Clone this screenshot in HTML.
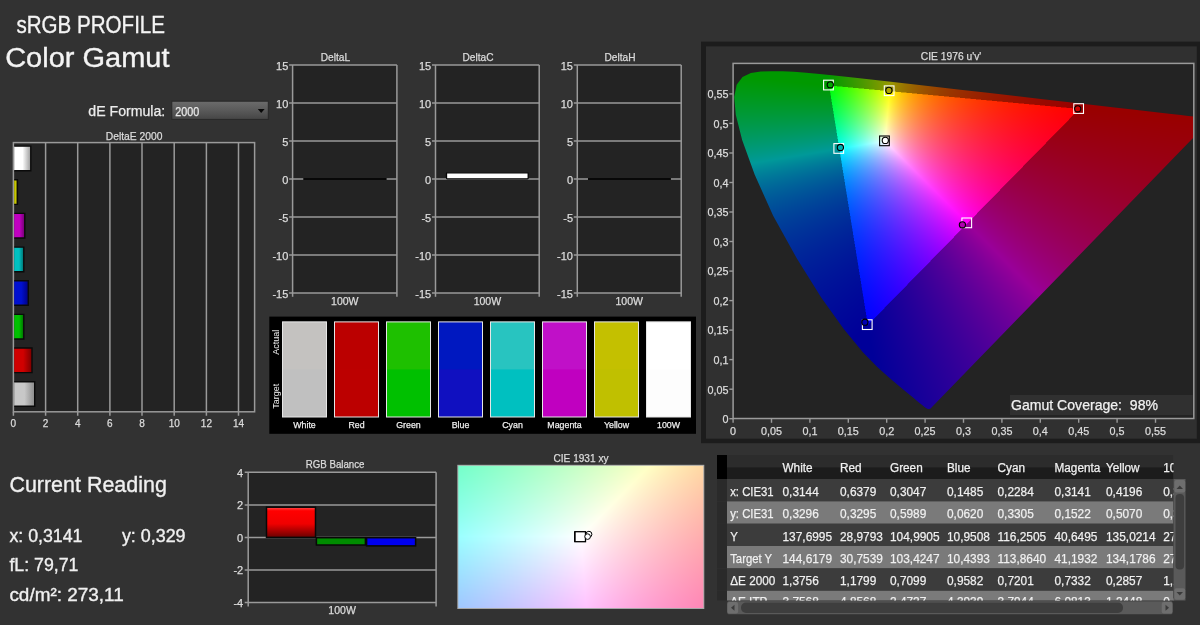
<!DOCTYPE html>
<html><head><meta charset="utf-8"><style>
html,body{margin:0;padding:0;}
body{width:1200px;height:625px;overflow:hidden;background:#323232;position:relative;font-family:"Liberation Sans",sans-serif;}
svg{position:absolute;left:0;top:0;font-family:"Liberation Sans",sans-serif;}
canvas{position:absolute;}
</style></head><body>
<svg width="1200" height="625" viewBox="0 0 1200 625"><defs><linearGradient id="dd" x1="0" y1="0" x2="0" y2="1"><stop offset="0" stop-color="#6c6c6c"/><stop offset="0.5" stop-color="#5a5a5a"/><stop offset="1" stop-color="#454545"/></linearGradient></defs><rect x="171.8" y="101.2" width="96.5" height="18.2" fill="url(#dd)" stroke="#282828" stroke-width="1"/><rect x="13.4" y="142.6" width="241.2" height="269.20000000000005" fill="#232323"/><rect x="292.6" y="65.0" width="104.29999999999995" height="228.0" fill="#232323"/><rect x="435.5" y="65.0" width="103.70000000000005" height="228.0" fill="#232323"/><rect x="577.3" y="65.0" width="103.90000000000009" height="228.0" fill="#232323"/><rect x="269.3" y="316.6" width="426.7" height="117.2" fill="#000"/><rect x="701" y="41.6" width="499" height="401.6" fill="#1c1c1c"/><rect x="706" y="46.4" width="490.8" height="392.3" fill="#303030"/><rect x="248.2" y="472.3" width="187.9" height="130.3" fill="#232323"/><filter id="fb" x="0" y="0" width="1" height="1"><feGaussianBlur stdDeviation="4"/></filter><clipPath id="locus"><path d="M930.3,408.7 L930.2,408.7 L930.0,408.9 L929.8,408.9 L929.5,409.1 L929.1,409.1 L928.6,409.1 L927.9,409.1 L926.8,408.5 L924.8,407.2 L922.1,405.1 L918.2,402.0 L913.3,397.8 L907.2,392.6 L899.0,386.0 L889.3,377.8 L877.3,366.9 L862.9,352.2 L843.8,329.1 L821.2,297.5 L796.7,258.2 L773.1,215.6 L754.7,174.8 L742.2,140.4 L735.8,114.8 L734.2,96.9 L736.7,84.7 L742.5,76.9 L750.9,73.0 L760.8,71.5 L771.5,71.1 L782.5,71.3 L793.9,71.8 L806.3,72.7 L819.7,73.9 L834.4,75.4 L850.7,77.2 L868.7,79.2 L888.7,81.4 L910.6,84.0 L934.6,86.7 L960.4,89.7 L987.7,92.8 L1015.8,96.1 L1043.0,99.2 L1069.4,102.3 L1093.4,105.0 L1114.6,107.5 L1132.7,109.5 L1147.8,111.3 L1160.5,112.7 L1171.5,114.0 L1180.9,115.1 L1188.4,115.9 L1194.3,116.6 L1198.8,117.2 L1202.3,117.5 L1204.5,117.8 L1206.3,118.0 L1207.7,118.2 L1209.2,118.3 L1210.4,118.5 L1211.2,118.6 L1211.7,118.6 L1211.9,118.7 Z"/></clipPath><rect x="733" y="63" width="461" height="356" fill="#232323"/><g clip-path="url(#locus)"><rect x="733" y="63" width="90" height="10" fill="#009900"/><rect x="823" y="63" width="10" height="10" fill="#039900"/><rect x="833" y="63" width="10" height="10" fill="#169900"/><rect x="843" y="63" width="10" height="10" fill="#2a9900"/><rect x="853" y="63" width="10" height="10" fill="#409900"/><rect x="863" y="63" width="10" height="10" fill="#589900"/><rect x="873" y="63" width="10" height="10" fill="#719900"/><rect x="883" y="63" width="10" height="10" fill="#8d9900"/><rect x="893" y="63" width="10" height="10" fill="#998800"/><rect x="903" y="63" width="10" height="10" fill="#997200"/><rect x="913" y="63" width="10" height="10" fill="#996000"/><rect x="923" y="63" width="10" height="10" fill="#995300"/><rect x="933" y="63" width="10" height="10" fill="#994700"/><rect x="943" y="63" width="10" height="10" fill="#993e00"/><rect x="953" y="63" width="10" height="10" fill="#993600"/><rect x="963" y="63" width="10" height="10" fill="#992f00"/><rect x="973" y="63" width="10" height="10" fill="#992900"/><rect x="983" y="63" width="10" height="10" fill="#992300"/><rect x="993" y="63" width="10" height="10" fill="#991f00"/><rect x="1003" y="63" width="10" height="10" fill="#991b00"/><rect x="1013" y="63" width="10" height="10" fill="#991700"/><rect x="1023" y="63" width="10" height="10" fill="#991300"/><rect x="1033" y="63" width="10" height="10" fill="#991000"/><rect x="1043" y="63" width="10" height="10" fill="#990e00"/><rect x="1053" y="63" width="10" height="10" fill="#990b00"/><rect x="1063" y="63" width="10" height="10" fill="#990900"/><rect x="1073" y="63" width="10" height="10" fill="#990700"/><rect x="1083" y="63" width="10" height="10" fill="#990500"/><rect x="1093" y="63" width="10" height="10" fill="#990300"/><rect x="1103" y="63" width="10" height="10" fill="#990100"/><rect x="1113" y="63" width="81" height="10" fill="#990000"/><rect x="733" y="73" width="10" height="10" fill="#009901"/><rect x="743" y="73" width="90" height="10" fill="#009900"/><rect x="833" y="73" width="10" height="10" fill="#139900"/><rect x="843" y="73" width="10" height="10" fill="#289900"/><rect x="853" y="73" width="10" height="10" fill="#3f9900"/><rect x="863" y="73" width="10" height="10" fill="#589900"/><rect x="873" y="73" width="10" height="10" fill="#729900"/><rect x="883" y="73" width="10" height="10" fill="#8f9900"/><rect x="893" y="73" width="10" height="10" fill="#998500"/><rect x="903" y="73" width="10" height="10" fill="#996f00"/><rect x="913" y="73" width="10" height="10" fill="#995d00"/><rect x="923" y="73" width="10" height="10" fill="#995000"/><rect x="933" y="73" width="10" height="10" fill="#994400"/><rect x="943" y="73" width="10" height="10" fill="#993b00"/><rect x="953" y="73" width="10" height="10" fill="#993300"/><rect x="963" y="73" width="10" height="10" fill="#992c00"/><rect x="973" y="73" width="10" height="10" fill="#992600"/><rect x="983" y="73" width="10" height="10" fill="#992100"/><rect x="993" y="73" width="10" height="10" fill="#991c00"/><rect x="1003" y="73" width="10" height="10" fill="#991800"/><rect x="1013" y="73" width="10" height="10" fill="#991500"/><rect x="1023" y="73" width="10" height="10" fill="#991200"/><rect x="1033" y="73" width="10" height="10" fill="#990f00"/><rect x="1043" y="73" width="10" height="10" fill="#990c00"/><rect x="1053" y="73" width="10" height="10" fill="#990900"/><rect x="1063" y="73" width="10" height="10" fill="#990700"/><rect x="1073" y="73" width="10" height="10" fill="#990500"/><rect x="1083" y="73" width="10" height="10" fill="#990300"/><rect x="1093" y="73" width="10" height="10" fill="#990100"/><rect x="1103" y="73" width="91" height="10" fill="#990000"/><rect x="733" y="83" width="10" height="10" fill="#00990f"/><rect x="743" y="83" width="10" height="10" fill="#00990e"/><rect x="753" y="83" width="10" height="10" fill="#00990d"/><rect x="763" y="83" width="10" height="10" fill="#00990c"/><rect x="773" y="83" width="10" height="10" fill="#00990b"/><rect x="783" y="83" width="10" height="10" fill="#00990a"/><rect x="793" y="83" width="10" height="10" fill="#009908"/><rect x="803" y="83" width="10" height="10" fill="#009907"/><rect x="813" y="83" width="10" height="10" fill="#009906"/><rect x="823" y="83" width="10" height="10" fill="#009904"/><rect x="833" y="83" width="10" height="10" fill="#1cff05"/><rect x="843" y="83" width="10" height="10" fill="#40ff02"/><rect x="853" y="83" width="10" height="10" fill="#3e9900"/><rect x="863" y="83" width="10" height="10" fill="#589900"/><rect x="873" y="83" width="10" height="10" fill="#739900"/><rect x="883" y="83" width="10" height="10" fill="#929900"/><rect x="893" y="83" width="10" height="10" fill="#998200"/><rect x="903" y="83" width="10" height="10" fill="#996b00"/><rect x="913" y="83" width="10" height="10" fill="#995a00"/><rect x="923" y="83" width="10" height="10" fill="#994c00"/><rect x="933" y="83" width="10" height="10" fill="#994100"/><rect x="943" y="83" width="10" height="10" fill="#993800"/><rect x="953" y="83" width="10" height="10" fill="#993000"/><rect x="963" y="83" width="10" height="10" fill="#992a00"/><rect x="973" y="83" width="10" height="10" fill="#992400"/><rect x="983" y="83" width="10" height="10" fill="#991f00"/><rect x="993" y="83" width="10" height="10" fill="#991a00"/><rect x="1003" y="83" width="10" height="10" fill="#991600"/><rect x="1013" y="83" width="10" height="10" fill="#991300"/><rect x="1023" y="83" width="10" height="10" fill="#990f00"/><rect x="1033" y="83" width="10" height="10" fill="#990d00"/><rect x="1043" y="83" width="10" height="10" fill="#990a00"/><rect x="1053" y="83" width="10" height="10" fill="#990800"/><rect x="1063" y="83" width="10" height="10" fill="#990500"/><rect x="1073" y="83" width="10" height="10" fill="#990300"/><rect x="1083" y="83" width="10" height="10" fill="#990200"/><rect x="1093" y="83" width="101" height="10" fill="#990000"/><rect x="733" y="93" width="10" height="10" fill="#00991d"/><rect x="743" y="93" width="20" height="10" fill="#00991c"/><rect x="763" y="93" width="20" height="10" fill="#00991b"/><rect x="783" y="93" width="20" height="10" fill="#00991a"/><rect x="803" y="93" width="10" height="10" fill="#009919"/><rect x="813" y="93" width="10" height="10" fill="#009918"/><rect x="823" y="93" width="10" height="10" fill="#009917"/><rect x="833" y="93" width="10" height="10" fill="#18ff26"/><rect x="843" y="93" width="10" height="10" fill="#3dff24"/><rect x="853" y="93" width="10" height="10" fill="#66ff22"/><rect x="863" y="93" width="10" height="10" fill="#92ff20"/><rect x="873" y="93" width="10" height="10" fill="#c3ff1e"/><rect x="883" y="93" width="10" height="10" fill="#f8ff1c"/><rect x="893" y="93" width="10" height="10" fill="#ffd315"/><rect x="903" y="93" width="10" height="10" fill="#ffae0f"/><rect x="913" y="93" width="10" height="10" fill="#ff910b"/><rect x="923" y="93" width="10" height="10" fill="#ff7b07"/><rect x="933" y="93" width="10" height="10" fill="#ff6805"/><rect x="943" y="93" width="10" height="10" fill="#ff5902"/><rect x="953" y="93" width="10" height="10" fill="#ff4c00"/><rect x="963" y="93" width="10" height="10" fill="#992700"/><rect x="973" y="93" width="10" height="10" fill="#992100"/><rect x="983" y="93" width="10" height="10" fill="#991c00"/><rect x="993" y="93" width="10" height="10" fill="#991800"/><rect x="1003" y="93" width="10" height="10" fill="#991400"/><rect x="1013" y="93" width="10" height="10" fill="#991100"/><rect x="1023" y="93" width="10" height="10" fill="#990d00"/><rect x="1033" y="93" width="10" height="10" fill="#990b00"/><rect x="1043" y="93" width="10" height="10" fill="#990800"/><rect x="1053" y="93" width="10" height="10" fill="#990600"/><rect x="1063" y="93" width="10" height="10" fill="#990400"/><rect x="1073" y="93" width="10" height="10" fill="#990200"/><rect x="1083" y="93" width="111" height="10" fill="#990000"/><rect x="733" y="103" width="100" height="10" fill="#00992c"/><rect x="833" y="103" width="10" height="10" fill="#13ff49"/><rect x="843" y="103" width="10" height="10" fill="#3aff49"/><rect x="853" y="103" width="10" height="10" fill="#64ff49"/><rect x="863" y="103" width="10" height="10" fill="#92ff48"/><rect x="873" y="103" width="10" height="10" fill="#c5ff48"/><rect x="883" y="103" width="10" height="10" fill="#feff48"/><rect x="893" y="103" width="10" height="10" fill="#ffcd3a"/><rect x="903" y="103" width="10" height="10" fill="#ffa82f"/><rect x="913" y="103" width="10" height="10" fill="#ff8b27"/><rect x="923" y="103" width="10" height="10" fill="#ff7520"/><rect x="933" y="103" width="10" height="10" fill="#ff631b"/><rect x="943" y="103" width="10" height="10" fill="#ff5417"/><rect x="953" y="103" width="10" height="10" fill="#ff4713"/><rect x="963" y="103" width="10" height="10" fill="#ff3d10"/><rect x="973" y="103" width="10" height="10" fill="#ff330d"/><rect x="983" y="103" width="10" height="10" fill="#ff2b0b"/><rect x="993" y="103" width="10" height="10" fill="#ff2409"/><rect x="1003" y="103" width="10" height="10" fill="#ff1e07"/><rect x="1013" y="103" width="10" height="10" fill="#ff1806"/><rect x="1023" y="103" width="10" height="10" fill="#ff1304"/><rect x="1033" y="103" width="10" height="10" fill="#ff0f03"/><rect x="1043" y="103" width="10" height="10" fill="#ff0b02"/><rect x="1053" y="103" width="10" height="10" fill="#ff0701"/><rect x="1063" y="103" width="10" height="10" fill="#ff0300"/><rect x="1073" y="103" width="121" height="10" fill="#990000"/><rect x="733" y="113" width="10" height="10" fill="#00993c"/><rect x="743" y="113" width="20" height="10" fill="#00993d"/><rect x="763" y="113" width="20" height="10" fill="#00993e"/><rect x="783" y="113" width="10" height="10" fill="#00993f"/><rect x="793" y="113" width="20" height="10" fill="#009940"/><rect x="813" y="113" width="10" height="10" fill="#009941"/><rect x="823" y="113" width="10" height="10" fill="#009942"/><rect x="833" y="113" width="10" height="10" fill="#0dff6f"/><rect x="843" y="113" width="10" height="10" fill="#36ff71"/><rect x="853" y="113" width="10" height="10" fill="#62ff73"/><rect x="863" y="113" width="10" height="10" fill="#92ff75"/><rect x="873" y="113" width="10" height="10" fill="#c8ff77"/><rect x="883" y="113" width="10" height="10" fill="#fffa77"/><rect x="893" y="113" width="10" height="10" fill="#ffc760"/><rect x="903" y="113" width="10" height="10" fill="#ffa250"/><rect x="913" y="113" width="10" height="10" fill="#ff8644"/><rect x="923" y="113" width="10" height="10" fill="#ff6f3a"/><rect x="933" y="113" width="10" height="10" fill="#ff5e32"/><rect x="943" y="113" width="10" height="10" fill="#ff4f2c"/><rect x="953" y="113" width="10" height="10" fill="#ff4227"/><rect x="963" y="113" width="10" height="10" fill="#ff3822"/><rect x="973" y="113" width="10" height="10" fill="#ff2f1e"/><rect x="983" y="113" width="10" height="10" fill="#ff271b"/><rect x="993" y="113" width="10" height="10" fill="#ff2018"/><rect x="1003" y="113" width="10" height="10" fill="#ff1a15"/><rect x="1013" y="113" width="10" height="10" fill="#ff1513"/><rect x="1023" y="113" width="10" height="10" fill="#ff1010"/><rect x="1033" y="113" width="10" height="10" fill="#ff0b0f"/><rect x="1043" y="113" width="10" height="10" fill="#ff070d"/><rect x="1053" y="113" width="10" height="10" fill="#ff040b"/><rect x="1063" y="113" width="10" height="10" fill="#ff000a"/><rect x="1073" y="113" width="10" height="10" fill="#990005"/><rect x="1083" y="113" width="10" height="10" fill="#990004"/><rect x="1093" y="113" width="20" height="10" fill="#990003"/><rect x="1113" y="113" width="20" height="10" fill="#990002"/><rect x="1133" y="113" width="20" height="10" fill="#990001"/><rect x="1153" y="113" width="41" height="10" fill="#990000"/><rect x="733" y="123" width="10" height="10" fill="#00994d"/><rect x="743" y="123" width="10" height="10" fill="#00994e"/><rect x="753" y="123" width="10" height="10" fill="#009950"/><rect x="763" y="123" width="10" height="10" fill="#009951"/><rect x="773" y="123" width="10" height="10" fill="#009952"/><rect x="783" y="123" width="10" height="10" fill="#009953"/><rect x="793" y="123" width="10" height="10" fill="#009955"/><rect x="803" y="123" width="10" height="10" fill="#009956"/><rect x="813" y="123" width="10" height="10" fill="#009958"/><rect x="823" y="123" width="10" height="10" fill="#00995a"/><rect x="833" y="123" width="10" height="10" fill="#08ff99"/><rect x="843" y="123" width="10" height="10" fill="#31ff9d"/><rect x="853" y="123" width="10" height="10" fill="#60ffa1"/><rect x="863" y="123" width="10" height="10" fill="#92ffa5"/><rect x="873" y="123" width="10" height="10" fill="#cbffaa"/><rect x="883" y="123" width="10" height="10" fill="#fff4a8"/><rect x="893" y="123" width="10" height="10" fill="#ffc089"/><rect x="903" y="123" width="10" height="10" fill="#ff9b73"/><rect x="913" y="123" width="10" height="10" fill="#ff7f62"/><rect x="923" y="123" width="10" height="10" fill="#ff6a55"/><rect x="933" y="123" width="10" height="10" fill="#ff584a"/><rect x="943" y="123" width="10" height="10" fill="#ff4942"/><rect x="953" y="123" width="10" height="10" fill="#ff3d3b"/><rect x="963" y="123" width="10" height="10" fill="#ff3334"/><rect x="973" y="123" width="10" height="10" fill="#ff2a2f"/><rect x="983" y="123" width="10" height="10" fill="#ff232b"/><rect x="993" y="123" width="10" height="10" fill="#ff1c26"/><rect x="1003" y="123" width="10" height="10" fill="#ff1623"/><rect x="1013" y="123" width="10" height="10" fill="#ff1120"/><rect x="1023" y="123" width="10" height="10" fill="#ff0c1d"/><rect x="1033" y="123" width="10" height="10" fill="#ff081a"/><rect x="1043" y="123" width="10" height="10" fill="#ff0418"/><rect x="1053" y="123" width="10" height="10" fill="#ff0016"/><rect x="1063" y="123" width="10" height="10" fill="#99000c"/><rect x="1073" y="123" width="10" height="10" fill="#99000b"/><rect x="1083" y="123" width="10" height="10" fill="#99000a"/><rect x="1093" y="123" width="10" height="10" fill="#990009"/><rect x="1103" y="123" width="10" height="10" fill="#990008"/><rect x="1113" y="123" width="20" height="10" fill="#990007"/><rect x="1133" y="123" width="10" height="10" fill="#990006"/><rect x="1143" y="123" width="20" height="10" fill="#990005"/><rect x="1163" y="123" width="20" height="10" fill="#990004"/><rect x="1183" y="123" width="11" height="10" fill="#990003"/><rect x="733" y="133" width="10" height="10" fill="#009960"/><rect x="743" y="133" width="10" height="10" fill="#009961"/><rect x="753" y="133" width="10" height="10" fill="#009963"/><rect x="763" y="133" width="10" height="10" fill="#009965"/><rect x="773" y="133" width="10" height="10" fill="#009967"/><rect x="783" y="133" width="10" height="10" fill="#009969"/><rect x="793" y="133" width="10" height="10" fill="#00996b"/><rect x="803" y="133" width="10" height="10" fill="#00996e"/><rect x="813" y="133" width="10" height="10" fill="#009971"/><rect x="823" y="133" width="10" height="10" fill="#009974"/><rect x="833" y="133" width="10" height="10" fill="#01ffc7"/><rect x="843" y="133" width="10" height="10" fill="#2dffcd"/><rect x="853" y="133" width="10" height="10" fill="#5dffd3"/><rect x="863" y="133" width="10" height="10" fill="#92ffdb"/><rect x="873" y="133" width="10" height="10" fill="#ceffe3"/><rect x="883" y="133" width="10" height="10" fill="#ffeddc"/><rect x="893" y="133" width="10" height="10" fill="#ffbab4"/><rect x="903" y="133" width="10" height="10" fill="#ff9597"/><rect x="913" y="133" width="10" height="10" fill="#ff7982"/><rect x="923" y="133" width="10" height="10" fill="#ff6371"/><rect x="933" y="133" width="10" height="10" fill="#ff5263"/><rect x="943" y="133" width="10" height="10" fill="#ff4458"/><rect x="953" y="133" width="10" height="10" fill="#ff384f"/><rect x="963" y="133" width="10" height="10" fill="#ff2e47"/><rect x="973" y="133" width="10" height="10" fill="#ff2641"/><rect x="983" y="133" width="10" height="10" fill="#ff1e3b"/><rect x="993" y="133" width="10" height="10" fill="#ff1836"/><rect x="1003" y="133" width="10" height="10" fill="#ff1231"/><rect x="1013" y="133" width="10" height="10" fill="#ff0d2d"/><rect x="1023" y="133" width="10" height="10" fill="#ff082a"/><rect x="1033" y="133" width="10" height="10" fill="#ff0426"/><rect x="1043" y="133" width="10" height="10" fill="#ff0124"/><rect x="1053" y="133" width="10" height="10" fill="#990014"/><rect x="1063" y="133" width="10" height="10" fill="#990012"/><rect x="1073" y="133" width="10" height="10" fill="#990011"/><rect x="1083" y="133" width="10" height="10" fill="#990010"/><rect x="1093" y="133" width="10" height="10" fill="#99000e"/><rect x="1103" y="133" width="10" height="10" fill="#99000d"/><rect x="1113" y="133" width="10" height="10" fill="#99000c"/><rect x="1123" y="133" width="20" height="10" fill="#99000b"/><rect x="1143" y="133" width="10" height="10" fill="#99000a"/><rect x="1153" y="133" width="10" height="10" fill="#990009"/><rect x="1163" y="133" width="20" height="10" fill="#990008"/><rect x="1183" y="133" width="11" height="10" fill="#990007"/><rect x="733" y="143" width="10" height="10" fill="#009973"/><rect x="743" y="143" width="10" height="10" fill="#009975"/><rect x="753" y="143" width="10" height="10" fill="#009978"/><rect x="763" y="143" width="10" height="10" fill="#00997b"/><rect x="773" y="143" width="10" height="10" fill="#00997e"/><rect x="783" y="143" width="10" height="10" fill="#009981"/><rect x="793" y="143" width="10" height="10" fill="#009984"/><rect x="803" y="143" width="10" height="10" fill="#009988"/><rect x="813" y="143" width="10" height="10" fill="#00998c"/><rect x="823" y="143" width="10" height="10" fill="#009990"/><rect x="833" y="143" width="10" height="10" fill="#009995"/><rect x="843" y="143" width="10" height="10" fill="#27fbff"/><rect x="853" y="143" width="10" height="10" fill="#56f2ff"/><rect x="863" y="143" width="10" height="10" fill="#86e8ff"/><rect x="873" y="143" width="10" height="10" fill="#b7deff"/><rect x="883" y="143" width="10" height="10" fill="#ebd4ff"/><rect x="893" y="143" width="10" height="10" fill="#ffb3e1"/><rect x="903" y="143" width="10" height="10" fill="#ff8ebd"/><rect x="913" y="143" width="10" height="10" fill="#ff72a2"/><rect x="923" y="143" width="10" height="10" fill="#ff5d8e"/><rect x="933" y="143" width="10" height="10" fill="#ff4c7d"/><rect x="943" y="143" width="10" height="10" fill="#ff3e6f"/><rect x="953" y="143" width="10" height="10" fill="#ff3364"/><rect x="963" y="143" width="10" height="10" fill="#ff295b"/><rect x="973" y="143" width="10" height="10" fill="#ff2152"/><rect x="983" y="143" width="10" height="10" fill="#ff1a4b"/><rect x="993" y="143" width="10" height="10" fill="#ff1345"/><rect x="1003" y="143" width="10" height="10" fill="#ff0e40"/><rect x="1013" y="143" width="10" height="10" fill="#ff093b"/><rect x="1023" y="143" width="10" height="10" fill="#ff0537"/><rect x="1033" y="143" width="10" height="10" fill="#ff0133"/><rect x="1043" y="143" width="10" height="10" fill="#99001c"/><rect x="1053" y="143" width="10" height="10" fill="#99001a"/><rect x="1063" y="143" width="10" height="10" fill="#990018"/><rect x="1073" y="143" width="10" height="10" fill="#990017"/><rect x="1083" y="143" width="10" height="10" fill="#990015"/><rect x="1093" y="143" width="10" height="10" fill="#990014"/><rect x="1103" y="143" width="10" height="10" fill="#990013"/><rect x="1113" y="143" width="10" height="10" fill="#990012"/><rect x="1123" y="143" width="10" height="10" fill="#990010"/><rect x="1133" y="143" width="20" height="10" fill="#99000f"/><rect x="1153" y="143" width="10" height="10" fill="#99000e"/><rect x="1163" y="143" width="10" height="10" fill="#99000d"/><rect x="1173" y="143" width="10" height="10" fill="#99000c"/><rect x="1183" y="143" width="11" height="10" fill="#99000b"/><rect x="733" y="153" width="10" height="10" fill="#009988"/><rect x="743" y="153" width="10" height="10" fill="#00998b"/><rect x="753" y="153" width="10" height="10" fill="#00998e"/><rect x="763" y="153" width="10" height="10" fill="#009992"/><rect x="773" y="153" width="10" height="10" fill="#009996"/><rect x="783" y="153" width="10" height="10" fill="#009799"/><rect x="793" y="153" width="10" height="10" fill="#009299"/><rect x="803" y="153" width="10" height="10" fill="#008e99"/><rect x="813" y="153" width="10" height="10" fill="#008999"/><rect x="823" y="153" width="10" height="10" fill="#008599"/><rect x="833" y="153" width="10" height="10" fill="#008099"/><rect x="843" y="153" width="10" height="10" fill="#1bcdff"/><rect x="853" y="153" width="10" height="10" fill="#43c4ff"/><rect x="863" y="153" width="10" height="10" fill="#6cbbff"/><rect x="873" y="153" width="10" height="10" fill="#96b2ff"/><rect x="883" y="153" width="10" height="10" fill="#c1a9ff"/><rect x="893" y="153" width="10" height="10" fill="#ed9fff"/><rect x="903" y="153" width="10" height="10" fill="#ff87e5"/><rect x="913" y="153" width="10" height="10" fill="#ff6cc4"/><rect x="923" y="153" width="10" height="10" fill="#ff57ab"/><rect x="933" y="153" width="10" height="10" fill="#ff4697"/><rect x="943" y="153" width="10" height="10" fill="#ff3987"/><rect x="953" y="153" width="10" height="10" fill="#ff2e7a"/><rect x="963" y="153" width="10" height="10" fill="#ff246e"/><rect x="973" y="153" width="10" height="10" fill="#ff1c65"/><rect x="983" y="153" width="10" height="10" fill="#ff155c"/><rect x="993" y="153" width="10" height="10" fill="#ff0f55"/><rect x="1003" y="153" width="10" height="10" fill="#ff0a4e"/><rect x="1013" y="153" width="10" height="10" fill="#ff0549"/><rect x="1023" y="153" width="10" height="10" fill="#ff0144"/><rect x="1033" y="153" width="10" height="10" fill="#990026"/><rect x="1043" y="153" width="10" height="10" fill="#990023"/><rect x="1053" y="153" width="10" height="10" fill="#990021"/><rect x="1063" y="153" width="10" height="10" fill="#99001f"/><rect x="1073" y="153" width="10" height="10" fill="#99001d"/><rect x="1083" y="153" width="10" height="10" fill="#99001b"/><rect x="1093" y="153" width="10" height="10" fill="#99001a"/><rect x="1103" y="153" width="10" height="10" fill="#990018"/><rect x="1113" y="153" width="10" height="10" fill="#990017"/><rect x="1123" y="153" width="10" height="10" fill="#990016"/><rect x="1133" y="153" width="10" height="10" fill="#990014"/><rect x="1143" y="153" width="10" height="10" fill="#990013"/><rect x="1153" y="153" width="10" height="10" fill="#990012"/><rect x="1163" y="153" width="10" height="10" fill="#990011"/><rect x="1173" y="153" width="10" height="10" fill="#990010"/><rect x="1183" y="153" width="11" height="10" fill="#99000f"/><rect x="733" y="163" width="10" height="10" fill="#009399"/><rect x="743" y="163" width="10" height="10" fill="#009099"/><rect x="753" y="163" width="10" height="10" fill="#008c99"/><rect x="763" y="163" width="10" height="10" fill="#008899"/><rect x="773" y="163" width="10" height="10" fill="#008499"/><rect x="783" y="163" width="10" height="10" fill="#008099"/><rect x="793" y="163" width="10" height="10" fill="#007c99"/><rect x="803" y="163" width="10" height="10" fill="#007899"/><rect x="813" y="163" width="10" height="10" fill="#007399"/><rect x="823" y="163" width="10" height="10" fill="#006f99"/><rect x="833" y="163" width="10" height="10" fill="#006a99"/><rect x="843" y="163" width="10" height="10" fill="#12aaff"/><rect x="853" y="163" width="10" height="10" fill="#35a2ff"/><rect x="863" y="163" width="10" height="10" fill="#589aff"/><rect x="873" y="163" width="10" height="10" fill="#7d91ff"/><rect x="883" y="163" width="10" height="10" fill="#a289ff"/><rect x="893" y="163" width="10" height="10" fill="#c880ff"/><rect x="903" y="163" width="10" height="10" fill="#ef77ff"/><rect x="913" y="163" width="10" height="10" fill="#ff64e8"/><rect x="923" y="163" width="10" height="10" fill="#ff50ca"/><rect x="933" y="163" width="10" height="10" fill="#ff40b3"/><rect x="943" y="163" width="10" height="10" fill="#ff33a0"/><rect x="953" y="163" width="10" height="10" fill="#ff2890"/><rect x="963" y="163" width="10" height="10" fill="#ff1f83"/><rect x="973" y="163" width="10" height="10" fill="#ff1777"/><rect x="983" y="163" width="10" height="10" fill="#ff106e"/><rect x="993" y="163" width="10" height="10" fill="#ff0b65"/><rect x="1003" y="163" width="10" height="10" fill="#ff065e"/><rect x="1013" y="163" width="10" height="10" fill="#ff0157"/><rect x="1023" y="163" width="10" height="10" fill="#990030"/><rect x="1033" y="163" width="10" height="10" fill="#99002d"/><rect x="1043" y="163" width="10" height="10" fill="#99002a"/><rect x="1053" y="163" width="10" height="10" fill="#990028"/><rect x="1063" y="163" width="10" height="10" fill="#990025"/><rect x="1073" y="163" width="10" height="10" fill="#990023"/><rect x="1083" y="163" width="10" height="10" fill="#990021"/><rect x="1093" y="163" width="10" height="10" fill="#99001f"/><rect x="1103" y="163" width="10" height="10" fill="#99001e"/><rect x="1113" y="163" width="10" height="10" fill="#99001c"/><rect x="1123" y="163" width="10" height="10" fill="#99001b"/><rect x="1133" y="163" width="10" height="10" fill="#990019"/><rect x="1143" y="163" width="10" height="10" fill="#990018"/><rect x="1153" y="163" width="10" height="10" fill="#990017"/><rect x="1163" y="163" width="10" height="10" fill="#990016"/><rect x="1173" y="163" width="10" height="10" fill="#990015"/><rect x="1183" y="163" width="10" height="10" fill="#990014"/><rect x="1193" y="163" width="1" height="10" fill="#990013"/><rect x="733" y="173" width="10" height="10" fill="#008099"/><rect x="743" y="173" width="10" height="10" fill="#007d99"/><rect x="753" y="173" width="10" height="10" fill="#007999"/><rect x="763" y="173" width="10" height="10" fill="#007599"/><rect x="773" y="173" width="10" height="10" fill="#007299"/><rect x="783" y="173" width="10" height="10" fill="#006e99"/><rect x="793" y="173" width="10" height="10" fill="#006a99"/><rect x="803" y="173" width="10" height="10" fill="#006699"/><rect x="813" y="173" width="10" height="10" fill="#006299"/><rect x="823" y="173" width="10" height="10" fill="#005e99"/><rect x="833" y="173" width="10" height="10" fill="#005a99"/><rect x="843" y="173" width="10" height="10" fill="#0b8eff"/><rect x="853" y="173" width="10" height="10" fill="#2a87ff"/><rect x="863" y="173" width="10" height="10" fill="#4980ff"/><rect x="873" y="173" width="10" height="10" fill="#6978ff"/><rect x="883" y="173" width="10" height="10" fill="#8a70ff"/><rect x="893" y="173" width="10" height="10" fill="#ac68ff"/><rect x="903" y="173" width="10" height="10" fill="#ce60ff"/><rect x="913" y="173" width="10" height="10" fill="#f158ff"/><rect x="923" y="173" width="10" height="10" fill="#ff49ea"/><rect x="933" y="173" width="10" height="10" fill="#ff39cf"/><rect x="943" y="173" width="10" height="10" fill="#ff2db9"/><rect x="953" y="173" width="10" height="10" fill="#ff22a7"/><rect x="963" y="173" width="10" height="10" fill="#ff1997"/><rect x="973" y="173" width="10" height="10" fill="#ff128a"/><rect x="983" y="173" width="10" height="10" fill="#ff0c7f"/><rect x="993" y="173" width="10" height="10" fill="#ff0675"/><rect x="1003" y="173" width="10" height="10" fill="#ff016d"/><rect x="1013" y="173" width="10" height="10" fill="#99003d"/><rect x="1023" y="173" width="10" height="10" fill="#990039"/><rect x="1033" y="173" width="10" height="10" fill="#990035"/><rect x="1043" y="173" width="10" height="10" fill="#990032"/><rect x="1053" y="173" width="10" height="10" fill="#99002f"/><rect x="1063" y="173" width="10" height="10" fill="#99002c"/><rect x="1073" y="173" width="10" height="10" fill="#99002a"/><rect x="1083" y="173" width="10" height="10" fill="#990027"/><rect x="1093" y="173" width="10" height="10" fill="#990025"/><rect x="1103" y="173" width="10" height="10" fill="#990023"/><rect x="1113" y="173" width="10" height="10" fill="#990021"/><rect x="1123" y="173" width="10" height="10" fill="#990020"/><rect x="1133" y="173" width="10" height="10" fill="#99001e"/><rect x="1143" y="173" width="10" height="10" fill="#99001d"/><rect x="1153" y="173" width="10" height="10" fill="#99001b"/><rect x="1163" y="173" width="10" height="10" fill="#99001a"/><rect x="1173" y="173" width="10" height="10" fill="#990019"/><rect x="1183" y="173" width="10" height="10" fill="#990018"/><rect x="1193" y="173" width="1" height="10" fill="#990017"/><rect x="733" y="183" width="10" height="10" fill="#007099"/><rect x="743" y="183" width="10" height="10" fill="#006d99"/><rect x="753" y="183" width="10" height="10" fill="#006a99"/><rect x="763" y="183" width="10" height="10" fill="#006699"/><rect x="773" y="183" width="10" height="10" fill="#006399"/><rect x="783" y="183" width="10" height="10" fill="#005f99"/><rect x="793" y="183" width="10" height="10" fill="#005b99"/><rect x="803" y="183" width="10" height="10" fill="#005899"/><rect x="813" y="183" width="10" height="10" fill="#005499"/><rect x="823" y="183" width="10" height="10" fill="#005099"/><rect x="833" y="183" width="10" height="10" fill="#004c99"/><rect x="843" y="183" width="10" height="10" fill="#0679ff"/><rect x="853" y="183" width="10" height="10" fill="#2172ff"/><rect x="863" y="183" width="10" height="10" fill="#3d6bff"/><rect x="873" y="183" width="10" height="10" fill="#5a64ff"/><rect x="883" y="183" width="10" height="10" fill="#775dff"/><rect x="893" y="183" width="10" height="10" fill="#9555ff"/><rect x="903" y="183" width="10" height="10" fill="#b34eff"/><rect x="913" y="183" width="10" height="10" fill="#d246ff"/><rect x="923" y="183" width="10" height="10" fill="#f23eff"/><rect x="933" y="183" width="10" height="10" fill="#ff32ec"/><rect x="943" y="183" width="10" height="10" fill="#ff26d3"/><rect x="953" y="183" width="10" height="10" fill="#ff1cbe"/><rect x="963" y="183" width="10" height="10" fill="#ff14ad"/><rect x="973" y="183" width="10" height="10" fill="#ff0d9e"/><rect x="983" y="183" width="10" height="10" fill="#ff0791"/><rect x="993" y="183" width="10" height="10" fill="#ff0186"/><rect x="1003" y="183" width="10" height="10" fill="#99004b"/><rect x="1013" y="183" width="10" height="10" fill="#990045"/><rect x="1023" y="183" width="10" height="10" fill="#990041"/><rect x="1033" y="183" width="10" height="10" fill="#99003d"/><rect x="1043" y="183" width="10" height="10" fill="#990039"/><rect x="1053" y="183" width="10" height="10" fill="#990036"/><rect x="1063" y="183" width="10" height="10" fill="#990033"/><rect x="1073" y="183" width="10" height="10" fill="#990030"/><rect x="1083" y="183" width="10" height="10" fill="#99002d"/><rect x="1093" y="183" width="10" height="10" fill="#99002b"/><rect x="1103" y="183" width="10" height="10" fill="#990029"/><rect x="1113" y="183" width="10" height="10" fill="#990027"/><rect x="1123" y="183" width="10" height="10" fill="#990025"/><rect x="1133" y="183" width="10" height="10" fill="#990023"/><rect x="1143" y="183" width="10" height="10" fill="#990022"/><rect x="1153" y="183" width="10" height="10" fill="#990020"/><rect x="1163" y="183" width="10" height="10" fill="#99001f"/><rect x="1173" y="183" width="10" height="10" fill="#99001d"/><rect x="1183" y="183" width="10" height="10" fill="#99001c"/><rect x="1193" y="183" width="1" height="10" fill="#99001b"/><rect x="733" y="193" width="10" height="10" fill="#006399"/><rect x="743" y="193" width="10" height="10" fill="#006099"/><rect x="753" y="193" width="10" height="10" fill="#005d99"/><rect x="763" y="193" width="10" height="10" fill="#005a99"/><rect x="773" y="193" width="10" height="10" fill="#005699"/><rect x="783" y="193" width="10" height="10" fill="#005399"/><rect x="793" y="193" width="10" height="10" fill="#004f99"/><rect x="803" y="193" width="10" height="10" fill="#004c99"/><rect x="813" y="193" width="10" height="10" fill="#004899"/><rect x="823" y="193" width="10" height="10" fill="#004599"/><rect x="833" y="193" width="10" height="10" fill="#004199"/><rect x="843" y="193" width="10" height="10" fill="#0167ff"/><rect x="853" y="193" width="10" height="10" fill="#1a60ff"/><rect x="863" y="193" width="10" height="10" fill="#345aff"/><rect x="873" y="193" width="10" height="10" fill="#4e53ff"/><rect x="883" y="193" width="10" height="10" fill="#684dff"/><rect x="893" y="193" width="10" height="10" fill="#8346ff"/><rect x="903" y="193" width="10" height="10" fill="#9e3fff"/><rect x="913" y="193" width="10" height="10" fill="#ba38ff"/><rect x="923" y="193" width="10" height="10" fill="#d631ff"/><rect x="933" y="193" width="10" height="10" fill="#f329ff"/><rect x="943" y="193" width="10" height="10" fill="#ff20ee"/><rect x="953" y="193" width="10" height="10" fill="#ff16d6"/><rect x="963" y="193" width="10" height="10" fill="#ff0ec3"/><rect x="973" y="193" width="10" height="10" fill="#ff07b2"/><rect x="983" y="193" width="10" height="10" fill="#ff02a4"/><rect x="993" y="193" width="10" height="10" fill="#99005b"/><rect x="1003" y="193" width="10" height="10" fill="#990054"/><rect x="1013" y="193" width="10" height="10" fill="#99004e"/><rect x="1023" y="193" width="10" height="10" fill="#990049"/><rect x="1033" y="193" width="10" height="10" fill="#990045"/><rect x="1043" y="193" width="10" height="10" fill="#990041"/><rect x="1053" y="193" width="10" height="10" fill="#99003d"/><rect x="1063" y="193" width="10" height="10" fill="#99003a"/><rect x="1073" y="193" width="10" height="10" fill="#990036"/><rect x="1083" y="193" width="10" height="10" fill="#990034"/><rect x="1093" y="193" width="10" height="10" fill="#990031"/><rect x="1103" y="193" width="10" height="10" fill="#99002f"/><rect x="1113" y="193" width="10" height="10" fill="#99002c"/><rect x="1123" y="193" width="10" height="10" fill="#99002a"/><rect x="1133" y="193" width="10" height="10" fill="#990028"/><rect x="1143" y="193" width="10" height="10" fill="#990027"/><rect x="1153" y="193" width="10" height="10" fill="#990025"/><rect x="1163" y="193" width="10" height="10" fill="#990023"/><rect x="1173" y="193" width="10" height="10" fill="#990022"/><rect x="1183" y="193" width="10" height="10" fill="#990020"/><rect x="1193" y="193" width="1" height="10" fill="#99001f"/><rect x="733" y="203" width="10" height="10" fill="#005899"/><rect x="743" y="203" width="10" height="10" fill="#005599"/><rect x="753" y="203" width="10" height="10" fill="#005299"/><rect x="763" y="203" width="10" height="10" fill="#004f99"/><rect x="773" y="203" width="10" height="10" fill="#004c99"/><rect x="783" y="203" width="10" height="10" fill="#004999"/><rect x="793" y="203" width="10" height="10" fill="#004599"/><rect x="803" y="203" width="10" height="10" fill="#004299"/><rect x="813" y="203" width="10" height="10" fill="#003f99"/><rect x="823" y="203" width="10" height="10" fill="#003b99"/><rect x="833" y="203" width="10" height="10" fill="#003899"/><rect x="843" y="203" width="10" height="10" fill="#003499"/><rect x="853" y="203" width="10" height="10" fill="#1452ff"/><rect x="863" y="203" width="10" height="10" fill="#2c4cff"/><rect x="873" y="203" width="10" height="10" fill="#4346ff"/><rect x="883" y="203" width="10" height="10" fill="#5b3fff"/><rect x="893" y="203" width="10" height="10" fill="#7439ff"/><rect x="903" y="203" width="10" height="10" fill="#8c33ff"/><rect x="913" y="203" width="10" height="10" fill="#a62cff"/><rect x="923" y="203" width="10" height="10" fill="#bf26ff"/><rect x="933" y="203" width="10" height="10" fill="#d91fff"/><rect x="943" y="203" width="10" height="10" fill="#f418ff"/><rect x="953" y="203" width="10" height="10" fill="#ff10ef"/><rect x="963" y="203" width="10" height="10" fill="#ff08d9"/><rect x="973" y="203" width="10" height="10" fill="#ff02c7"/><rect x="983" y="203" width="10" height="10" fill="#99006d"/><rect x="993" y="203" width="10" height="10" fill="#990065"/><rect x="1003" y="203" width="10" height="10" fill="#99005e"/><rect x="1013" y="203" width="10" height="10" fill="#990058"/><rect x="1023" y="203" width="10" height="10" fill="#990052"/><rect x="1033" y="203" width="10" height="10" fill="#99004d"/><rect x="1043" y="203" width="10" height="10" fill="#990048"/><rect x="1053" y="203" width="10" height="10" fill="#990044"/><rect x="1063" y="203" width="10" height="10" fill="#990040"/><rect x="1073" y="203" width="10" height="10" fill="#99003d"/><rect x="1083" y="203" width="10" height="10" fill="#99003a"/><rect x="1093" y="203" width="10" height="10" fill="#990037"/><rect x="1103" y="203" width="10" height="10" fill="#990034"/><rect x="1113" y="203" width="10" height="10" fill="#990032"/><rect x="1123" y="203" width="10" height="10" fill="#990030"/><rect x="1133" y="203" width="10" height="10" fill="#99002d"/><rect x="1143" y="203" width="10" height="10" fill="#99002c"/><rect x="1153" y="203" width="10" height="10" fill="#99002a"/><rect x="1163" y="203" width="10" height="10" fill="#990028"/><rect x="1173" y="203" width="10" height="10" fill="#990026"/><rect x="1183" y="203" width="10" height="10" fill="#990025"/><rect x="1193" y="203" width="1" height="10" fill="#990023"/><rect x="733" y="213" width="10" height="10" fill="#004f99"/><rect x="743" y="213" width="10" height="10" fill="#004c99"/><rect x="753" y="213" width="10" height="10" fill="#004999"/><rect x="763" y="213" width="10" height="10" fill="#004699"/><rect x="773" y="213" width="10" height="10" fill="#004399"/><rect x="783" y="213" width="10" height="10" fill="#004099"/><rect x="793" y="213" width="10" height="10" fill="#003d99"/><rect x="803" y="213" width="10" height="10" fill="#003a99"/><rect x="813" y="213" width="10" height="10" fill="#003699"/><rect x="823" y="213" width="10" height="10" fill="#003399"/><rect x="833" y="213" width="10" height="10" fill="#003099"/><rect x="843" y="213" width="10" height="10" fill="#002d99"/><rect x="853" y="213" width="10" height="10" fill="#0f45ff"/><rect x="863" y="213" width="10" height="10" fill="#2540ff"/><rect x="873" y="213" width="10" height="10" fill="#3a3aff"/><rect x="883" y="213" width="10" height="10" fill="#5034ff"/><rect x="893" y="213" width="10" height="10" fill="#672eff"/><rect x="903" y="213" width="10" height="10" fill="#7e28ff"/><rect x="913" y="213" width="10" height="10" fill="#9522ff"/><rect x="923" y="213" width="10" height="10" fill="#ac1cff"/><rect x="933" y="213" width="10" height="10" fill="#c416ff"/><rect x="943" y="213" width="10" height="10" fill="#dc10ff"/><rect x="953" y="213" width="10" height="10" fill="#f409ff"/><rect x="963" y="213" width="10" height="10" fill="#ff02f0"/><rect x="973" y="213" width="10" height="10" fill="#990084"/><rect x="983" y="213" width="10" height="10" fill="#990079"/><rect x="993" y="213" width="10" height="10" fill="#990070"/><rect x="1003" y="213" width="10" height="10" fill="#990068"/><rect x="1013" y="213" width="10" height="10" fill="#990061"/><rect x="1023" y="213" width="10" height="10" fill="#99005b"/><rect x="1033" y="213" width="10" height="10" fill="#990055"/><rect x="1043" y="213" width="10" height="10" fill="#990050"/><rect x="1053" y="213" width="10" height="10" fill="#99004c"/><rect x="1063" y="213" width="10" height="10" fill="#990047"/><rect x="1073" y="213" width="10" height="10" fill="#990044"/><rect x="1083" y="213" width="10" height="10" fill="#990040"/><rect x="1093" y="213" width="10" height="10" fill="#99003d"/><rect x="1103" y="213" width="10" height="10" fill="#99003a"/><rect x="1113" y="213" width="10" height="10" fill="#990038"/><rect x="1123" y="213" width="10" height="10" fill="#990035"/><rect x="1133" y="213" width="10" height="10" fill="#990033"/><rect x="1143" y="213" width="10" height="10" fill="#990031"/><rect x="1153" y="213" width="10" height="10" fill="#99002f"/><rect x="1163" y="213" width="10" height="10" fill="#99002d"/><rect x="1173" y="213" width="10" height="10" fill="#99002b"/><rect x="1183" y="213" width="10" height="10" fill="#990029"/><rect x="1193" y="213" width="1" height="10" fill="#990028"/><rect x="733" y="223" width="10" height="10" fill="#004699"/><rect x="743" y="223" width="10" height="10" fill="#004399"/><rect x="753" y="223" width="10" height="10" fill="#004199"/><rect x="763" y="223" width="10" height="10" fill="#003e99"/><rect x="773" y="223" width="10" height="10" fill="#003b99"/><rect x="783" y="223" width="10" height="10" fill="#003899"/><rect x="793" y="223" width="10" height="10" fill="#003599"/><rect x="803" y="223" width="10" height="10" fill="#003299"/><rect x="813" y="223" width="10" height="10" fill="#002f99"/><rect x="823" y="223" width="10" height="10" fill="#002c99"/><rect x="833" y="223" width="10" height="10" fill="#002999"/><rect x="843" y="223" width="10" height="10" fill="#002699"/><rect x="853" y="223" width="10" height="10" fill="#0b3bff"/><rect x="863" y="223" width="10" height="10" fill="#1f36ff"/><rect x="873" y="223" width="10" height="10" fill="#3330ff"/><rect x="883" y="223" width="10" height="10" fill="#472bff"/><rect x="893" y="223" width="10" height="10" fill="#5c25ff"/><rect x="903" y="223" width="10" height="10" fill="#7120ff"/><rect x="913" y="223" width="10" height="10" fill="#861aff"/><rect x="923" y="223" width="10" height="10" fill="#9c14ff"/><rect x="933" y="223" width="10" height="10" fill="#b20eff"/><rect x="943" y="223" width="10" height="10" fill="#c808ff"/><rect x="953" y="223" width="10" height="10" fill="#de02ff"/><rect x="963" y="223" width="10" height="10" fill="#930099"/><rect x="973" y="223" width="10" height="10" fill="#990091"/><rect x="983" y="223" width="10" height="10" fill="#990085"/><rect x="993" y="223" width="10" height="10" fill="#99007b"/><rect x="1003" y="223" width="10" height="10" fill="#990072"/><rect x="1013" y="223" width="10" height="10" fill="#99006a"/><rect x="1023" y="223" width="10" height="10" fill="#990064"/><rect x="1033" y="223" width="10" height="10" fill="#99005e"/><rect x="1043" y="223" width="10" height="10" fill="#990058"/><rect x="1053" y="223" width="10" height="10" fill="#990053"/><rect x="1063" y="223" width="10" height="10" fill="#99004f"/><rect x="1073" y="223" width="10" height="10" fill="#99004a"/><rect x="1083" y="223" width="10" height="10" fill="#990047"/><rect x="1093" y="223" width="10" height="10" fill="#990043"/><rect x="1103" y="223" width="10" height="10" fill="#990040"/><rect x="1113" y="223" width="10" height="10" fill="#99003d"/><rect x="1123" y="223" width="10" height="10" fill="#99003a"/><rect x="1133" y="223" width="10" height="10" fill="#990038"/><rect x="1143" y="223" width="10" height="10" fill="#990036"/><rect x="1153" y="223" width="10" height="10" fill="#990033"/><rect x="1163" y="223" width="10" height="10" fill="#990031"/><rect x="1173" y="223" width="10" height="10" fill="#99002f"/><rect x="1183" y="223" width="10" height="10" fill="#99002e"/><rect x="1193" y="223" width="1" height="10" fill="#99002c"/><rect x="733" y="233" width="10" height="10" fill="#003f99"/><rect x="743" y="233" width="10" height="10" fill="#003c99"/><rect x="753" y="233" width="10" height="10" fill="#003a99"/><rect x="763" y="233" width="10" height="10" fill="#003799"/><rect x="773" y="233" width="10" height="10" fill="#003499"/><rect x="783" y="233" width="10" height="10" fill="#003299"/><rect x="793" y="233" width="10" height="10" fill="#002f99"/><rect x="803" y="233" width="10" height="10" fill="#002c99"/><rect x="813" y="233" width="10" height="10" fill="#002999"/><rect x="823" y="233" width="10" height="10" fill="#002699"/><rect x="833" y="233" width="10" height="10" fill="#002499"/><rect x="843" y="233" width="10" height="10" fill="#002199"/><rect x="853" y="233" width="10" height="10" fill="#0732ff"/><rect x="863" y="233" width="10" height="10" fill="#1a2dff"/><rect x="873" y="233" width="10" height="10" fill="#2c28ff"/><rect x="883" y="233" width="10" height="10" fill="#3f23ff"/><rect x="893" y="233" width="10" height="10" fill="#531dff"/><rect x="903" y="233" width="10" height="10" fill="#6618ff"/><rect x="913" y="233" width="10" height="10" fill="#7a13ff"/><rect x="923" y="233" width="10" height="10" fill="#8e0dff"/><rect x="933" y="233" width="10" height="10" fill="#a208ff"/><rect x="943" y="233" width="10" height="10" fill="#b602ff"/><rect x="953" y="233" width="10" height="10" fill="#7a0099"/><rect x="963" y="233" width="10" height="10" fill="#860099"/><rect x="973" y="233" width="10" height="10" fill="#930099"/><rect x="983" y="233" width="10" height="10" fill="#990091"/><rect x="993" y="233" width="10" height="10" fill="#990086"/><rect x="1003" y="233" width="10" height="10" fill="#99007d"/><rect x="1013" y="233" width="10" height="10" fill="#990074"/><rect x="1023" y="233" width="10" height="10" fill="#99006d"/><rect x="1033" y="233" width="10" height="10" fill="#990066"/><rect x="1043" y="233" width="10" height="10" fill="#990060"/><rect x="1053" y="233" width="10" height="10" fill="#99005b"/><rect x="1063" y="233" width="10" height="10" fill="#990056"/><rect x="1073" y="233" width="10" height="10" fill="#990051"/><rect x="1083" y="233" width="10" height="10" fill="#99004d"/><rect x="1093" y="233" width="10" height="10" fill="#99004a"/><rect x="1103" y="233" width="10" height="10" fill="#990046"/><rect x="1113" y="233" width="10" height="10" fill="#990043"/><rect x="1123" y="233" width="10" height="10" fill="#990040"/><rect x="1133" y="233" width="10" height="10" fill="#99003d"/><rect x="1143" y="233" width="10" height="10" fill="#99003b"/><rect x="1153" y="233" width="10" height="10" fill="#990038"/><rect x="1163" y="233" width="10" height="10" fill="#990036"/><rect x="1173" y="233" width="10" height="10" fill="#990034"/><rect x="1183" y="233" width="10" height="10" fill="#990032"/><rect x="1193" y="233" width="1" height="10" fill="#990030"/><rect x="733" y="243" width="10" height="10" fill="#003999"/><rect x="743" y="243" width="10" height="10" fill="#003699"/><rect x="753" y="243" width="10" height="10" fill="#003499"/><rect x="763" y="243" width="10" height="10" fill="#003199"/><rect x="773" y="243" width="10" height="10" fill="#002e99"/><rect x="783" y="243" width="10" height="10" fill="#002c99"/><rect x="793" y="243" width="10" height="10" fill="#002999"/><rect x="803" y="243" width="10" height="10" fill="#002799"/><rect x="813" y="243" width="10" height="10" fill="#002499"/><rect x="823" y="243" width="10" height="10" fill="#002199"/><rect x="833" y="243" width="10" height="10" fill="#001e99"/><rect x="843" y="243" width="10" height="10" fill="#001c99"/><rect x="853" y="243" width="10" height="10" fill="#042aff"/><rect x="863" y="243" width="10" height="10" fill="#1525ff"/><rect x="873" y="243" width="10" height="10" fill="#2720ff"/><rect x="883" y="243" width="10" height="10" fill="#391bff"/><rect x="893" y="243" width="10" height="10" fill="#4a16ff"/><rect x="903" y="243" width="10" height="10" fill="#5d11ff"/><rect x="913" y="243" width="10" height="10" fill="#6f0cff"/><rect x="923" y="243" width="10" height="10" fill="#8207ff"/><rect x="933" y="243" width="10" height="10" fill="#9402ff"/><rect x="943" y="243" width="10" height="10" fill="#640099"/><rect x="953" y="243" width="10" height="10" fill="#700099"/><rect x="963" y="243" width="10" height="10" fill="#7c0099"/><rect x="973" y="243" width="10" height="10" fill="#870099"/><rect x="983" y="243" width="10" height="10" fill="#930099"/><rect x="993" y="243" width="10" height="10" fill="#990092"/><rect x="1003" y="243" width="10" height="10" fill="#990087"/><rect x="1013" y="243" width="10" height="10" fill="#99007e"/><rect x="1023" y="243" width="10" height="10" fill="#990076"/><rect x="1033" y="243" width="10" height="10" fill="#99006f"/><rect x="1043" y="243" width="10" height="10" fill="#990068"/><rect x="1053" y="243" width="10" height="10" fill="#990062"/><rect x="1063" y="243" width="10" height="10" fill="#99005d"/><rect x="1073" y="243" width="10" height="10" fill="#990058"/><rect x="1083" y="243" width="10" height="10" fill="#990054"/><rect x="1093" y="243" width="10" height="10" fill="#990050"/><rect x="1103" y="243" width="10" height="10" fill="#99004c"/><rect x="1113" y="243" width="10" height="10" fill="#990049"/><rect x="1123" y="243" width="10" height="10" fill="#990046"/><rect x="1133" y="243" width="10" height="10" fill="#990043"/><rect x="1143" y="243" width="10" height="10" fill="#990040"/><rect x="1153" y="243" width="10" height="10" fill="#99003d"/><rect x="1163" y="243" width="10" height="10" fill="#99003b"/><rect x="1173" y="243" width="10" height="10" fill="#990039"/><rect x="1183" y="243" width="10" height="10" fill="#990037"/><rect x="1193" y="243" width="1" height="10" fill="#990035"/><rect x="733" y="253" width="10" height="10" fill="#003399"/><rect x="743" y="253" width="10" height="10" fill="#003099"/><rect x="753" y="253" width="10" height="10" fill="#002e99"/><rect x="763" y="253" width="10" height="10" fill="#002c99"/><rect x="773" y="253" width="10" height="10" fill="#002999"/><rect x="783" y="253" width="10" height="10" fill="#002799"/><rect x="793" y="253" width="10" height="10" fill="#002499"/><rect x="803" y="253" width="10" height="10" fill="#002299"/><rect x="813" y="253" width="10" height="10" fill="#001f99"/><rect x="823" y="253" width="10" height="10" fill="#001d99"/><rect x="833" y="253" width="10" height="10" fill="#001a99"/><rect x="843" y="253" width="10" height="10" fill="#001799"/><rect x="853" y="253" width="10" height="10" fill="#0123ff"/><rect x="863" y="253" width="10" height="10" fill="#111eff"/><rect x="873" y="253" width="10" height="10" fill="#221aff"/><rect x="883" y="253" width="10" height="10" fill="#3215ff"/><rect x="893" y="253" width="10" height="10" fill="#4310ff"/><rect x="903" y="253" width="10" height="10" fill="#540cff"/><rect x="913" y="253" width="10" height="10" fill="#6507ff"/><rect x="923" y="253" width="10" height="10" fill="#7702ff"/><rect x="933" y="253" width="10" height="10" fill="#520099"/><rect x="943" y="253" width="10" height="10" fill="#5c0099"/><rect x="953" y="253" width="10" height="10" fill="#670099"/><rect x="963" y="253" width="10" height="10" fill="#720099"/><rect x="973" y="253" width="10" height="10" fill="#7d0099"/><rect x="983" y="253" width="10" height="10" fill="#880099"/><rect x="993" y="253" width="10" height="10" fill="#940099"/><rect x="1003" y="253" width="10" height="10" fill="#990092"/><rect x="1013" y="253" width="10" height="10" fill="#990088"/><rect x="1023" y="253" width="10" height="10" fill="#99007f"/><rect x="1033" y="253" width="10" height="10" fill="#990078"/><rect x="1043" y="253" width="10" height="10" fill="#990071"/><rect x="1053" y="253" width="10" height="10" fill="#99006a"/><rect x="1063" y="253" width="10" height="10" fill="#990065"/><rect x="1073" y="253" width="10" height="10" fill="#99005f"/><rect x="1083" y="253" width="10" height="10" fill="#99005b"/><rect x="1093" y="253" width="10" height="10" fill="#990056"/><rect x="1103" y="253" width="10" height="10" fill="#990052"/><rect x="1113" y="253" width="10" height="10" fill="#99004f"/><rect x="1123" y="253" width="10" height="10" fill="#99004b"/><rect x="1133" y="253" width="10" height="10" fill="#990048"/><rect x="1143" y="253" width="10" height="10" fill="#990045"/><rect x="1153" y="253" width="10" height="10" fill="#990042"/><rect x="1163" y="253" width="10" height="10" fill="#990040"/><rect x="1173" y="253" width="10" height="10" fill="#99003d"/><rect x="1183" y="253" width="10" height="10" fill="#99003b"/><rect x="1193" y="253" width="1" height="10" fill="#990039"/><rect x="733" y="263" width="10" height="10" fill="#002e99"/><rect x="743" y="263" width="10" height="10" fill="#002b99"/><rect x="753" y="263" width="10" height="10" fill="#002999"/><rect x="763" y="263" width="10" height="10" fill="#002799"/><rect x="773" y="263" width="10" height="10" fill="#002499"/><rect x="783" y="263" width="10" height="10" fill="#002299"/><rect x="793" y="263" width="10" height="10" fill="#002099"/><rect x="803" y="263" width="10" height="10" fill="#001d99"/><rect x="813" y="263" width="10" height="10" fill="#001b99"/><rect x="823" y="263" width="10" height="10" fill="#001899"/><rect x="833" y="263" width="10" height="10" fill="#001699"/><rect x="843" y="263" width="10" height="10" fill="#001399"/><rect x="853" y="263" width="10" height="10" fill="#001199"/><rect x="863" y="263" width="10" height="10" fill="#0e18ff"/><rect x="873" y="263" width="10" height="10" fill="#1d14ff"/><rect x="883" y="263" width="10" height="10" fill="#2d0fff"/><rect x="893" y="263" width="10" height="10" fill="#3d0bff"/><rect x="903" y="263" width="10" height="10" fill="#4d07ff"/><rect x="913" y="263" width="10" height="10" fill="#5d02ff"/><rect x="923" y="263" width="10" height="10" fill="#410099"/><rect x="933" y="263" width="10" height="10" fill="#4b0099"/><rect x="943" y="263" width="10" height="10" fill="#550099"/><rect x="953" y="263" width="10" height="10" fill="#600099"/><rect x="963" y="263" width="10" height="10" fill="#6a0099"/><rect x="973" y="263" width="10" height="10" fill="#740099"/><rect x="983" y="263" width="10" height="10" fill="#7f0099"/><rect x="993" y="263" width="10" height="10" fill="#890099"/><rect x="1003" y="263" width="10" height="10" fill="#940099"/><rect x="1013" y="263" width="10" height="10" fill="#990092"/><rect x="1023" y="263" width="10" height="10" fill="#990089"/><rect x="1033" y="263" width="10" height="10" fill="#990081"/><rect x="1043" y="263" width="10" height="10" fill="#990079"/><rect x="1053" y="263" width="10" height="10" fill="#990072"/><rect x="1063" y="263" width="10" height="10" fill="#99006c"/><rect x="1073" y="263" width="10" height="10" fill="#990067"/><rect x="1083" y="263" width="10" height="10" fill="#990062"/><rect x="1093" y="263" width="10" height="10" fill="#99005d"/><rect x="1103" y="263" width="10" height="10" fill="#990059"/><rect x="1113" y="263" width="10" height="10" fill="#990055"/><rect x="1123" y="263" width="10" height="10" fill="#990051"/><rect x="1133" y="263" width="10" height="10" fill="#99004e"/><rect x="1143" y="263" width="10" height="10" fill="#99004a"/><rect x="1153" y="263" width="10" height="10" fill="#990048"/><rect x="1163" y="263" width="10" height="10" fill="#990045"/><rect x="1173" y="263" width="10" height="10" fill="#990042"/><rect x="1183" y="263" width="10" height="10" fill="#990040"/><rect x="1193" y="263" width="1" height="10" fill="#99003d"/><rect x="733" y="273" width="10" height="10" fill="#002999"/><rect x="743" y="273" width="10" height="10" fill="#002799"/><rect x="753" y="273" width="10" height="10" fill="#002599"/><rect x="763" y="273" width="10" height="10" fill="#002299"/><rect x="773" y="273" width="10" height="10" fill="#002099"/><rect x="783" y="273" width="10" height="10" fill="#001e99"/><rect x="793" y="273" width="10" height="10" fill="#001c99"/><rect x="803" y="273" width="10" height="10" fill="#001999"/><rect x="813" y="273" width="10" height="10" fill="#001799"/><rect x="823" y="273" width="10" height="10" fill="#001599"/><rect x="833" y="273" width="10" height="10" fill="#001299"/><rect x="843" y="273" width="10" height="10" fill="#001099"/><rect x="853" y="273" width="10" height="10" fill="#000d99"/><rect x="863" y="273" width="10" height="10" fill="#0b13ff"/><rect x="873" y="273" width="10" height="10" fill="#190fff"/><rect x="883" y="273" width="10" height="10" fill="#280aff"/><rect x="893" y="273" width="10" height="10" fill="#3706ff"/><rect x="903" y="273" width="10" height="10" fill="#4602ff"/><rect x="913" y="273" width="10" height="10" fill="#330099"/><rect x="923" y="273" width="10" height="10" fill="#3c0099"/><rect x="933" y="273" width="10" height="10" fill="#460099"/><rect x="943" y="273" width="10" height="10" fill="#4f0099"/><rect x="953" y="273" width="10" height="10" fill="#590099"/><rect x="963" y="273" width="10" height="10" fill="#620099"/><rect x="973" y="273" width="10" height="10" fill="#6c0099"/><rect x="983" y="273" width="10" height="10" fill="#760099"/><rect x="993" y="273" width="10" height="10" fill="#800099"/><rect x="1003" y="273" width="10" height="10" fill="#8a0099"/><rect x="1013" y="273" width="10" height="10" fill="#940099"/><rect x="1023" y="273" width="10" height="10" fill="#990093"/><rect x="1033" y="273" width="10" height="10" fill="#99008a"/><rect x="1043" y="273" width="10" height="10" fill="#990082"/><rect x="1053" y="273" width="10" height="10" fill="#99007a"/><rect x="1063" y="273" width="10" height="10" fill="#990074"/><rect x="1073" y="273" width="10" height="10" fill="#99006e"/><rect x="1083" y="273" width="10" height="10" fill="#990068"/><rect x="1093" y="273" width="10" height="10" fill="#990064"/><rect x="1103" y="273" width="10" height="10" fill="#99005f"/><rect x="1113" y="273" width="10" height="10" fill="#99005b"/><rect x="1123" y="273" width="10" height="10" fill="#990057"/><rect x="1133" y="273" width="10" height="10" fill="#990053"/><rect x="1143" y="273" width="10" height="10" fill="#990050"/><rect x="1153" y="273" width="10" height="10" fill="#99004d"/><rect x="1163" y="273" width="10" height="10" fill="#99004a"/><rect x="1173" y="273" width="10" height="10" fill="#990047"/><rect x="1183" y="273" width="10" height="10" fill="#990044"/><rect x="1193" y="273" width="1" height="10" fill="#990042"/><rect x="733" y="283" width="10" height="10" fill="#002599"/><rect x="743" y="283" width="10" height="10" fill="#002399"/><rect x="753" y="283" width="10" height="10" fill="#002199"/><rect x="763" y="283" width="10" height="10" fill="#001f99"/><rect x="773" y="283" width="10" height="10" fill="#001c99"/><rect x="783" y="283" width="10" height="10" fill="#001a99"/><rect x="793" y="283" width="10" height="10" fill="#001899"/><rect x="803" y="283" width="10" height="10" fill="#001699"/><rect x="813" y="283" width="10" height="10" fill="#001499"/><rect x="823" y="283" width="10" height="10" fill="#001199"/><rect x="833" y="283" width="10" height="10" fill="#000f99"/><rect x="843" y="283" width="10" height="10" fill="#000d99"/><rect x="853" y="283" width="10" height="10" fill="#000a99"/><rect x="863" y="283" width="10" height="10" fill="#080eff"/><rect x="873" y="283" width="10" height="10" fill="#160aff"/><rect x="883" y="283" width="10" height="10" fill="#2406ff"/><rect x="893" y="283" width="10" height="10" fill="#3202ff"/><rect x="903" y="283" width="10" height="10" fill="#260099"/><rect x="913" y="283" width="10" height="10" fill="#2f0099"/><rect x="923" y="283" width="10" height="10" fill="#380099"/><rect x="933" y="283" width="10" height="10" fill="#410099"/><rect x="943" y="283" width="10" height="10" fill="#4a0099"/><rect x="953" y="283" width="10" height="10" fill="#530099"/><rect x="963" y="283" width="10" height="10" fill="#5c0099"/><rect x="973" y="283" width="10" height="10" fill="#650099"/><rect x="983" y="283" width="10" height="10" fill="#6e0099"/><rect x="993" y="283" width="10" height="10" fill="#780099"/><rect x="1003" y="283" width="10" height="10" fill="#810099"/><rect x="1013" y="283" width="10" height="10" fill="#8b0099"/><rect x="1023" y="283" width="10" height="10" fill="#940099"/><rect x="1033" y="283" width="10" height="10" fill="#990093"/><rect x="1043" y="283" width="10" height="10" fill="#99008a"/><rect x="1053" y="283" width="10" height="10" fill="#990083"/><rect x="1063" y="283" width="10" height="10" fill="#99007c"/><rect x="1073" y="283" width="10" height="10" fill="#990075"/><rect x="1083" y="283" width="10" height="10" fill="#990070"/><rect x="1093" y="283" width="10" height="10" fill="#99006a"/><rect x="1103" y="283" width="10" height="10" fill="#990065"/><rect x="1113" y="283" width="10" height="10" fill="#990061"/><rect x="1123" y="283" width="10" height="10" fill="#99005d"/><rect x="1133" y="283" width="10" height="10" fill="#990059"/><rect x="1143" y="283" width="10" height="10" fill="#990055"/><rect x="1153" y="283" width="10" height="10" fill="#990052"/><rect x="1163" y="283" width="10" height="10" fill="#99004f"/><rect x="1173" y="283" width="10" height="10" fill="#99004c"/><rect x="1183" y="283" width="10" height="10" fill="#990049"/><rect x="1193" y="283" width="1" height="10" fill="#990047"/><rect x="733" y="293" width="10" height="10" fill="#002199"/><rect x="743" y="293" width="10" height="10" fill="#001f99"/><rect x="753" y="293" width="10" height="10" fill="#001d99"/><rect x="763" y="293" width="10" height="10" fill="#001b99"/><rect x="773" y="293" width="10" height="10" fill="#001999"/><rect x="783" y="293" width="10" height="10" fill="#001799"/><rect x="793" y="293" width="10" height="10" fill="#001599"/><rect x="803" y="293" width="10" height="10" fill="#001399"/><rect x="813" y="293" width="10" height="10" fill="#001099"/><rect x="823" y="293" width="10" height="10" fill="#000e99"/><rect x="833" y="293" width="10" height="10" fill="#000c99"/><rect x="843" y="293" width="10" height="10" fill="#000a99"/><rect x="853" y="293" width="10" height="10" fill="#000899"/><rect x="863" y="293" width="10" height="10" fill="#0509ff"/><rect x="873" y="293" width="10" height="10" fill="#1306ff"/><rect x="883" y="293" width="10" height="10" fill="#2002ff"/><rect x="893" y="293" width="10" height="10" fill="#1b0099"/><rect x="903" y="293" width="10" height="10" fill="#230099"/><rect x="913" y="293" width="10" height="10" fill="#2b0099"/><rect x="923" y="293" width="10" height="10" fill="#340099"/><rect x="933" y="293" width="10" height="10" fill="#3c0099"/><rect x="943" y="293" width="10" height="10" fill="#450099"/><rect x="953" y="293" width="10" height="10" fill="#4d0099"/><rect x="963" y="293" width="10" height="10" fill="#560099"/><rect x="973" y="293" width="10" height="10" fill="#5f0099"/><rect x="983" y="293" width="10" height="10" fill="#670099"/><rect x="993" y="293" width="10" height="10" fill="#700099"/><rect x="1003" y="293" width="10" height="10" fill="#790099"/><rect x="1013" y="293" width="10" height="10" fill="#820099"/><rect x="1023" y="293" width="10" height="10" fill="#8b0099"/><rect x="1033" y="293" width="10" height="10" fill="#940099"/><rect x="1043" y="293" width="10" height="10" fill="#990093"/><rect x="1053" y="293" width="10" height="10" fill="#99008b"/><rect x="1063" y="293" width="10" height="10" fill="#990084"/><rect x="1073" y="293" width="10" height="10" fill="#99007d"/><rect x="1083" y="293" width="10" height="10" fill="#990077"/><rect x="1093" y="293" width="10" height="10" fill="#990071"/><rect x="1103" y="293" width="10" height="10" fill="#99006c"/><rect x="1113" y="293" width="10" height="10" fill="#990067"/><rect x="1123" y="293" width="10" height="10" fill="#990063"/><rect x="1133" y="293" width="10" height="10" fill="#99005f"/><rect x="1143" y="293" width="10" height="10" fill="#99005b"/><rect x="1153" y="293" width="10" height="10" fill="#990057"/><rect x="1163" y="293" width="10" height="10" fill="#990054"/><rect x="1173" y="293" width="10" height="10" fill="#990051"/><rect x="1183" y="293" width="10" height="10" fill="#99004e"/><rect x="1193" y="293" width="1" height="10" fill="#99004b"/><rect x="733" y="303" width="10" height="10" fill="#001e99"/><rect x="743" y="303" width="10" height="10" fill="#001c99"/><rect x="753" y="303" width="10" height="10" fill="#001a99"/><rect x="763" y="303" width="10" height="10" fill="#001899"/><rect x="773" y="303" width="10" height="10" fill="#001699"/><rect x="783" y="303" width="10" height="10" fill="#001499"/><rect x="793" y="303" width="10" height="10" fill="#001299"/><rect x="803" y="303" width="10" height="10" fill="#001099"/><rect x="813" y="303" width="10" height="10" fill="#000e99"/><rect x="823" y="303" width="10" height="10" fill="#000c99"/><rect x="833" y="303" width="10" height="10" fill="#000999"/><rect x="843" y="303" width="10" height="10" fill="#000799"/><rect x="853" y="303" width="10" height="10" fill="#000599"/><rect x="863" y="303" width="10" height="10" fill="#0305ff"/><rect x="873" y="303" width="10" height="10" fill="#1002ff"/><rect x="883" y="303" width="10" height="10" fill="#110099"/><rect x="893" y="303" width="10" height="10" fill="#190099"/><rect x="903" y="303" width="10" height="10" fill="#200099"/><rect x="913" y="303" width="10" height="10" fill="#280099"/><rect x="923" y="303" width="10" height="10" fill="#300099"/><rect x="933" y="303" width="10" height="10" fill="#380099"/><rect x="943" y="303" width="10" height="10" fill="#400099"/><rect x="953" y="303" width="10" height="10" fill="#480099"/><rect x="963" y="303" width="10" height="10" fill="#500099"/><rect x="973" y="303" width="10" height="10" fill="#590099"/><rect x="983" y="303" width="10" height="10" fill="#610099"/><rect x="993" y="303" width="10" height="10" fill="#690099"/><rect x="1003" y="303" width="10" height="10" fill="#720099"/><rect x="1013" y="303" width="10" height="10" fill="#7a0099"/><rect x="1023" y="303" width="10" height="10" fill="#830099"/><rect x="1033" y="303" width="10" height="10" fill="#8c0099"/><rect x="1043" y="303" width="10" height="10" fill="#950099"/><rect x="1053" y="303" width="10" height="10" fill="#990094"/><rect x="1063" y="303" width="10" height="10" fill="#99008c"/><rect x="1073" y="303" width="10" height="10" fill="#990084"/><rect x="1083" y="303" width="10" height="10" fill="#99007e"/><rect x="1093" y="303" width="10" height="10" fill="#990078"/><rect x="1103" y="303" width="10" height="10" fill="#990072"/><rect x="1113" y="303" width="10" height="10" fill="#99006d"/><rect x="1123" y="303" width="10" height="10" fill="#990069"/><rect x="1133" y="303" width="10" height="10" fill="#990064"/><rect x="1143" y="303" width="10" height="10" fill="#990060"/><rect x="1153" y="303" width="10" height="10" fill="#99005d"/><rect x="1163" y="303" width="10" height="10" fill="#990059"/><rect x="1173" y="303" width="10" height="10" fill="#990056"/><rect x="1183" y="303" width="10" height="10" fill="#990053"/><rect x="1193" y="303" width="1" height="10" fill="#990050"/><rect x="733" y="313" width="10" height="10" fill="#001a99"/><rect x="743" y="313" width="10" height="10" fill="#001999"/><rect x="753" y="313" width="10" height="10" fill="#001799"/><rect x="763" y="313" width="10" height="10" fill="#001599"/><rect x="773" y="313" width="10" height="10" fill="#001399"/><rect x="783" y="313" width="10" height="10" fill="#001199"/><rect x="793" y="313" width="10" height="10" fill="#000f99"/><rect x="803" y="313" width="10" height="10" fill="#000d99"/><rect x="813" y="313" width="10" height="10" fill="#000b99"/><rect x="823" y="313" width="10" height="10" fill="#000999"/><rect x="833" y="313" width="10" height="10" fill="#000799"/><rect x="843" y="313" width="10" height="10" fill="#000599"/><rect x="853" y="313" width="10" height="10" fill="#000399"/><rect x="863" y="313" width="10" height="10" fill="#0102ff"/><rect x="873" y="313" width="10" height="10" fill="#080099"/><rect x="883" y="313" width="10" height="10" fill="#0f0099"/><rect x="893" y="313" width="10" height="10" fill="#160099"/><rect x="903" y="313" width="10" height="10" fill="#1e0099"/><rect x="913" y="313" width="10" height="10" fill="#250099"/><rect x="923" y="313" width="10" height="10" fill="#2d0099"/><rect x="933" y="313" width="10" height="10" fill="#340099"/><rect x="943" y="313" width="10" height="10" fill="#3c0099"/><rect x="953" y="313" width="10" height="10" fill="#440099"/><rect x="963" y="313" width="10" height="10" fill="#4c0099"/><rect x="973" y="313" width="10" height="10" fill="#530099"/><rect x="983" y="313" width="10" height="10" fill="#5b0099"/><rect x="993" y="313" width="10" height="10" fill="#630099"/><rect x="1003" y="313" width="10" height="10" fill="#6b0099"/><rect x="1013" y="313" width="10" height="10" fill="#740099"/><rect x="1023" y="313" width="10" height="10" fill="#7c0099"/><rect x="1033" y="313" width="10" height="10" fill="#840099"/><rect x="1043" y="313" width="10" height="10" fill="#8c0099"/><rect x="1053" y="313" width="10" height="10" fill="#950099"/><rect x="1063" y="313" width="10" height="10" fill="#990094"/><rect x="1073" y="313" width="10" height="10" fill="#99008c"/><rect x="1083" y="313" width="10" height="10" fill="#990085"/><rect x="1093" y="313" width="10" height="10" fill="#99007f"/><rect x="1103" y="313" width="10" height="10" fill="#990079"/><rect x="1113" y="313" width="10" height="10" fill="#990074"/><rect x="1123" y="313" width="10" height="10" fill="#99006f"/><rect x="1133" y="313" width="10" height="10" fill="#99006a"/><rect x="1143" y="313" width="10" height="10" fill="#990066"/><rect x="1153" y="313" width="10" height="10" fill="#990062"/><rect x="1163" y="313" width="10" height="10" fill="#99005e"/><rect x="1173" y="313" width="10" height="10" fill="#99005b"/><rect x="1183" y="313" width="10" height="10" fill="#990057"/><rect x="1193" y="313" width="1" height="10" fill="#990054"/><rect x="733" y="323" width="10" height="10" fill="#001899"/><rect x="743" y="323" width="10" height="10" fill="#001699"/><rect x="753" y="323" width="10" height="10" fill="#001499"/><rect x="763" y="323" width="10" height="10" fill="#001299"/><rect x="773" y="323" width="10" height="10" fill="#001099"/><rect x="783" y="323" width="10" height="10" fill="#000e99"/><rect x="793" y="323" width="10" height="10" fill="#000c99"/><rect x="803" y="323" width="10" height="10" fill="#000b99"/><rect x="813" y="323" width="10" height="10" fill="#000999"/><rect x="823" y="323" width="10" height="10" fill="#000799"/><rect x="833" y="323" width="10" height="10" fill="#000599"/><rect x="843" y="323" width="10" height="10" fill="#000399"/><rect x="853" y="323" width="10" height="10" fill="#000199"/><rect x="863" y="323" width="10" height="10" fill="#000099"/><rect x="873" y="323" width="10" height="10" fill="#060099"/><rect x="883" y="323" width="10" height="10" fill="#0d0099"/><rect x="893" y="323" width="10" height="10" fill="#140099"/><rect x="903" y="323" width="10" height="10" fill="#1b0099"/><rect x="913" y="323" width="10" height="10" fill="#220099"/><rect x="923" y="323" width="10" height="10" fill="#2a0099"/><rect x="933" y="323" width="10" height="10" fill="#310099"/><rect x="943" y="323" width="10" height="10" fill="#380099"/><rect x="953" y="323" width="10" height="10" fill="#400099"/><rect x="963" y="323" width="10" height="10" fill="#470099"/><rect x="973" y="323" width="10" height="10" fill="#4f0099"/><rect x="983" y="323" width="10" height="10" fill="#560099"/><rect x="993" y="323" width="10" height="10" fill="#5e0099"/><rect x="1003" y="323" width="10" height="10" fill="#650099"/><rect x="1013" y="323" width="10" height="10" fill="#6d0099"/><rect x="1023" y="323" width="10" height="10" fill="#750099"/><rect x="1033" y="323" width="10" height="10" fill="#7d0099"/><rect x="1043" y="323" width="10" height="10" fill="#850099"/><rect x="1053" y="323" width="10" height="10" fill="#8d0099"/><rect x="1063" y="323" width="10" height="10" fill="#950099"/><rect x="1073" y="323" width="10" height="10" fill="#990094"/><rect x="1083" y="323" width="10" height="10" fill="#99008d"/><rect x="1093" y="323" width="10" height="10" fill="#990086"/><rect x="1103" y="323" width="10" height="10" fill="#990080"/><rect x="1113" y="323" width="10" height="10" fill="#99007a"/><rect x="1123" y="323" width="10" height="10" fill="#990075"/><rect x="1133" y="323" width="10" height="10" fill="#990070"/><rect x="1143" y="323" width="10" height="10" fill="#99006c"/><rect x="1153" y="323" width="10" height="10" fill="#990067"/><rect x="1163" y="323" width="10" height="10" fill="#990063"/><rect x="1173" y="323" width="10" height="10" fill="#990060"/><rect x="1183" y="323" width="10" height="10" fill="#99005c"/><rect x="1193" y="323" width="1" height="10" fill="#990059"/><rect x="733" y="333" width="10" height="10" fill="#001599"/><rect x="743" y="333" width="10" height="10" fill="#001399"/><rect x="753" y="333" width="10" height="10" fill="#001199"/><rect x="763" y="333" width="10" height="10" fill="#001099"/><rect x="773" y="333" width="10" height="10" fill="#000e99"/><rect x="783" y="333" width="10" height="10" fill="#000c99"/><rect x="793" y="333" width="10" height="10" fill="#000a99"/><rect x="803" y="333" width="10" height="10" fill="#000899"/><rect x="813" y="333" width="10" height="10" fill="#000699"/><rect x="823" y="333" width="10" height="10" fill="#000599"/><rect x="833" y="333" width="10" height="10" fill="#000399"/><rect x="843" y="333" width="10" height="10" fill="#000199"/><rect x="853" y="333" width="20" height="10" fill="#000099"/><rect x="873" y="333" width="10" height="10" fill="#050099"/><rect x="883" y="333" width="10" height="10" fill="#0c0099"/><rect x="893" y="333" width="10" height="10" fill="#120099"/><rect x="903" y="333" width="10" height="10" fill="#190099"/><rect x="913" y="333" width="10" height="10" fill="#200099"/><rect x="923" y="333" width="10" height="10" fill="#270099"/><rect x="933" y="333" width="10" height="10" fill="#2e0099"/><rect x="943" y="333" width="10" height="10" fill="#350099"/><rect x="953" y="333" width="10" height="10" fill="#3c0099"/><rect x="963" y="333" width="10" height="10" fill="#430099"/><rect x="973" y="333" width="10" height="10" fill="#4a0099"/><rect x="983" y="333" width="10" height="10" fill="#510099"/><rect x="993" y="333" width="10" height="10" fill="#590099"/><rect x="1003" y="333" width="10" height="10" fill="#600099"/><rect x="1013" y="333" width="10" height="10" fill="#670099"/><rect x="1023" y="333" width="10" height="10" fill="#6f0099"/><rect x="1033" y="333" width="10" height="10" fill="#760099"/><rect x="1043" y="333" width="10" height="10" fill="#7e0099"/><rect x="1053" y="333" width="10" height="10" fill="#860099"/><rect x="1063" y="333" width="10" height="10" fill="#8d0099"/><rect x="1073" y="333" width="10" height="10" fill="#950099"/><rect x="1083" y="333" width="10" height="10" fill="#990094"/><rect x="1093" y="333" width="10" height="10" fill="#99008d"/><rect x="1103" y="333" width="10" height="10" fill="#990087"/><rect x="1113" y="333" width="10" height="10" fill="#990081"/><rect x="1123" y="333" width="10" height="10" fill="#99007b"/><rect x="1133" y="333" width="10" height="10" fill="#990076"/><rect x="1143" y="333" width="10" height="10" fill="#990071"/><rect x="1153" y="333" width="10" height="10" fill="#99006d"/><rect x="1163" y="333" width="10" height="10" fill="#990069"/><rect x="1173" y="333" width="10" height="10" fill="#990065"/><rect x="1183" y="333" width="10" height="10" fill="#990061"/><rect x="1193" y="333" width="1" height="10" fill="#99005e"/><rect x="733" y="343" width="10" height="10" fill="#001299"/><rect x="743" y="343" width="10" height="10" fill="#001199"/><rect x="753" y="343" width="10" height="10" fill="#000f99"/><rect x="763" y="343" width="10" height="10" fill="#000d99"/><rect x="773" y="343" width="10" height="10" fill="#000b99"/><rect x="783" y="343" width="10" height="10" fill="#000a99"/><rect x="793" y="343" width="10" height="10" fill="#000899"/><rect x="803" y="343" width="10" height="10" fill="#000699"/><rect x="813" y="343" width="10" height="10" fill="#000499"/><rect x="823" y="343" width="10" height="10" fill="#000399"/><rect x="833" y="343" width="10" height="10" fill="#000199"/><rect x="843" y="343" width="30" height="10" fill="#000099"/><rect x="873" y="343" width="10" height="10" fill="#040099"/><rect x="883" y="343" width="10" height="10" fill="#0a0099"/><rect x="893" y="343" width="10" height="10" fill="#110099"/><rect x="903" y="343" width="10" height="10" fill="#170099"/><rect x="913" y="343" width="10" height="10" fill="#1e0099"/><rect x="923" y="343" width="10" height="10" fill="#240099"/><rect x="933" y="343" width="10" height="10" fill="#2b0099"/><rect x="943" y="343" width="10" height="10" fill="#320099"/><rect x="953" y="343" width="10" height="10" fill="#380099"/><rect x="963" y="343" width="10" height="10" fill="#3f0099"/><rect x="973" y="343" width="10" height="10" fill="#460099"/><rect x="983" y="343" width="10" height="10" fill="#4d0099"/><rect x="993" y="343" width="10" height="10" fill="#540099"/><rect x="1003" y="343" width="10" height="10" fill="#5b0099"/><rect x="1013" y="343" width="10" height="10" fill="#620099"/><rect x="1023" y="343" width="10" height="10" fill="#690099"/><rect x="1033" y="343" width="10" height="10" fill="#700099"/><rect x="1043" y="343" width="10" height="10" fill="#780099"/><rect x="1053" y="343" width="10" height="10" fill="#7f0099"/><rect x="1063" y="343" width="10" height="10" fill="#860099"/><rect x="1073" y="343" width="10" height="10" fill="#8e0099"/><rect x="1083" y="343" width="10" height="10" fill="#950099"/><rect x="1093" y="343" width="10" height="10" fill="#990094"/><rect x="1103" y="343" width="10" height="10" fill="#99008e"/><rect x="1113" y="343" width="10" height="10" fill="#990087"/><rect x="1123" y="343" width="10" height="10" fill="#990081"/><rect x="1133" y="343" width="10" height="10" fill="#99007c"/><rect x="1143" y="343" width="10" height="10" fill="#990077"/><rect x="1153" y="343" width="10" height="10" fill="#990072"/><rect x="1163" y="343" width="10" height="10" fill="#99006e"/><rect x="1173" y="343" width="10" height="10" fill="#99006a"/><rect x="1183" y="343" width="10" height="10" fill="#990066"/><rect x="1193" y="343" width="1" height="10" fill="#990063"/><rect x="733" y="353" width="10" height="10" fill="#001099"/><rect x="743" y="353" width="10" height="10" fill="#000e99"/><rect x="753" y="353" width="10" height="10" fill="#000d99"/><rect x="763" y="353" width="10" height="10" fill="#000b99"/><rect x="773" y="353" width="10" height="10" fill="#000999"/><rect x="783" y="353" width="10" height="10" fill="#000899"/><rect x="793" y="353" width="10" height="10" fill="#000699"/><rect x="803" y="353" width="10" height="10" fill="#000499"/><rect x="813" y="353" width="10" height="10" fill="#000399"/><rect x="823" y="353" width="10" height="10" fill="#000199"/><rect x="833" y="353" width="40" height="10" fill="#000099"/><rect x="873" y="353" width="10" height="10" fill="#020099"/><rect x="883" y="353" width="10" height="10" fill="#090099"/><rect x="893" y="353" width="10" height="10" fill="#0f0099"/><rect x="903" y="353" width="10" height="10" fill="#150099"/><rect x="913" y="353" width="10" height="10" fill="#1b0099"/><rect x="923" y="353" width="10" height="10" fill="#220099"/><rect x="933" y="353" width="10" height="10" fill="#280099"/><rect x="943" y="353" width="10" height="10" fill="#2f0099"/><rect x="953" y="353" width="10" height="10" fill="#350099"/><rect x="963" y="353" width="10" height="10" fill="#3c0099"/><rect x="973" y="353" width="10" height="10" fill="#420099"/><rect x="983" y="353" width="10" height="10" fill="#490099"/><rect x="993" y="353" width="10" height="10" fill="#500099"/><rect x="1003" y="353" width="10" height="10" fill="#560099"/><rect x="1013" y="353" width="10" height="10" fill="#5d0099"/><rect x="1023" y="353" width="10" height="10" fill="#640099"/><rect x="1033" y="353" width="10" height="10" fill="#6b0099"/><rect x="1043" y="353" width="10" height="10" fill="#720099"/><rect x="1053" y="353" width="10" height="10" fill="#790099"/><rect x="1063" y="353" width="10" height="10" fill="#800099"/><rect x="1073" y="353" width="10" height="10" fill="#870099"/><rect x="1083" y="353" width="10" height="10" fill="#8e0099"/><rect x="1093" y="353" width="10" height="10" fill="#950099"/><rect x="1103" y="353" width="10" height="10" fill="#990095"/><rect x="1113" y="353" width="10" height="10" fill="#99008e"/><rect x="1123" y="353" width="10" height="10" fill="#990088"/><rect x="1133" y="353" width="10" height="10" fill="#990082"/><rect x="1143" y="353" width="10" height="10" fill="#99007d"/><rect x="1153" y="353" width="10" height="10" fill="#990078"/><rect x="1163" y="353" width="10" height="10" fill="#990074"/><rect x="1173" y="353" width="10" height="10" fill="#99006f"/><rect x="1183" y="353" width="10" height="10" fill="#99006b"/><rect x="1193" y="353" width="1" height="10" fill="#990068"/><rect x="733" y="363" width="10" height="10" fill="#000e99"/><rect x="743" y="363" width="10" height="10" fill="#000c99"/><rect x="753" y="363" width="10" height="10" fill="#000b99"/><rect x="763" y="363" width="10" height="10" fill="#000999"/><rect x="773" y="363" width="10" height="10" fill="#000799"/><rect x="783" y="363" width="10" height="10" fill="#000699"/><rect x="793" y="363" width="10" height="10" fill="#000499"/><rect x="803" y="363" width="10" height="10" fill="#000299"/><rect x="813" y="363" width="10" height="10" fill="#000199"/><rect x="823" y="363" width="50" height="10" fill="#000099"/><rect x="873" y="363" width="10" height="10" fill="#010099"/><rect x="883" y="363" width="10" height="10" fill="#070099"/><rect x="893" y="363" width="10" height="10" fill="#0d0099"/><rect x="903" y="363" width="10" height="10" fill="#130099"/><rect x="913" y="363" width="10" height="10" fill="#190099"/><rect x="923" y="363" width="10" height="10" fill="#200099"/><rect x="933" y="363" width="10" height="10" fill="#260099"/><rect x="943" y="363" width="10" height="10" fill="#2c0099"/><rect x="953" y="363" width="10" height="10" fill="#320099"/><rect x="963" y="363" width="10" height="10" fill="#380099"/><rect x="973" y="363" width="10" height="10" fill="#3f0099"/><rect x="983" y="363" width="10" height="10" fill="#450099"/><rect x="993" y="363" width="10" height="10" fill="#4c0099"/><rect x="1003" y="363" width="10" height="10" fill="#520099"/><rect x="1013" y="363" width="10" height="10" fill="#590099"/><rect x="1023" y="363" width="10" height="10" fill="#5f0099"/><rect x="1033" y="363" width="10" height="10" fill="#660099"/><rect x="1043" y="363" width="10" height="10" fill="#6c0099"/><rect x="1053" y="363" width="10" height="10" fill="#730099"/><rect x="1063" y="363" width="10" height="10" fill="#7a0099"/><rect x="1073" y="363" width="10" height="10" fill="#810099"/><rect x="1083" y="363" width="10" height="10" fill="#870099"/><rect x="1093" y="363" width="10" height="10" fill="#8e0099"/><rect x="1103" y="363" width="10" height="10" fill="#950099"/><rect x="1113" y="363" width="10" height="10" fill="#990095"/><rect x="1123" y="363" width="10" height="10" fill="#99008e"/><rect x="1133" y="363" width="10" height="10" fill="#990088"/><rect x="1143" y="363" width="10" height="10" fill="#990083"/><rect x="1153" y="363" width="10" height="10" fill="#99007e"/><rect x="1163" y="363" width="10" height="10" fill="#990079"/><rect x="1173" y="363" width="10" height="10" fill="#990075"/><rect x="1183" y="363" width="10" height="10" fill="#990070"/><rect x="1193" y="363" width="1" height="10" fill="#99006d"/><rect x="733" y="373" width="10" height="10" fill="#000c99"/><rect x="743" y="373" width="10" height="10" fill="#000a99"/><rect x="753" y="373" width="10" height="10" fill="#000999"/><rect x="763" y="373" width="10" height="10" fill="#000799"/><rect x="773" y="373" width="10" height="10" fill="#000699"/><rect x="783" y="373" width="10" height="10" fill="#000499"/><rect x="793" y="373" width="10" height="10" fill="#000299"/><rect x="803" y="373" width="10" height="10" fill="#000199"/><rect x="813" y="373" width="70" height="10" fill="#000099"/><rect x="883" y="373" width="10" height="10" fill="#060099"/><rect x="893" y="373" width="10" height="10" fill="#0c0099"/><rect x="903" y="373" width="10" height="10" fill="#120099"/><rect x="913" y="373" width="10" height="10" fill="#180099"/><rect x="923" y="373" width="10" height="10" fill="#1d0099"/><rect x="933" y="373" width="10" height="10" fill="#230099"/><rect x="943" y="373" width="10" height="10" fill="#290099"/><rect x="953" y="373" width="10" height="10" fill="#2f0099"/><rect x="963" y="373" width="10" height="10" fill="#350099"/><rect x="973" y="373" width="10" height="10" fill="#3c0099"/><rect x="983" y="373" width="10" height="10" fill="#420099"/><rect x="993" y="373" width="10" height="10" fill="#480099"/><rect x="1003" y="373" width="10" height="10" fill="#4e0099"/><rect x="1013" y="373" width="10" height="10" fill="#540099"/><rect x="1023" y="373" width="10" height="10" fill="#5b0099"/><rect x="1033" y="373" width="10" height="10" fill="#610099"/><rect x="1043" y="373" width="10" height="10" fill="#670099"/><rect x="1053" y="373" width="10" height="10" fill="#6e0099"/><rect x="1063" y="373" width="10" height="10" fill="#740099"/><rect x="1073" y="373" width="10" height="10" fill="#7b0099"/><rect x="1083" y="373" width="10" height="10" fill="#810099"/><rect x="1093" y="373" width="10" height="10" fill="#880099"/><rect x="1103" y="373" width="10" height="10" fill="#8f0099"/><rect x="1113" y="373" width="10" height="10" fill="#950099"/><rect x="1123" y="373" width="10" height="10" fill="#990095"/><rect x="1133" y="373" width="10" height="10" fill="#99008f"/><rect x="1143" y="373" width="10" height="10" fill="#990089"/><rect x="1153" y="373" width="10" height="10" fill="#990084"/><rect x="1163" y="373" width="10" height="10" fill="#99007f"/><rect x="1173" y="373" width="10" height="10" fill="#99007a"/><rect x="1183" y="373" width="10" height="10" fill="#990076"/><rect x="1193" y="373" width="1" height="10" fill="#990071"/><rect x="733" y="383" width="10" height="10" fill="#000a99"/><rect x="743" y="383" width="10" height="10" fill="#000899"/><rect x="753" y="383" width="10" height="10" fill="#000799"/><rect x="763" y="383" width="10" height="10" fill="#000599"/><rect x="773" y="383" width="10" height="10" fill="#000499"/><rect x="783" y="383" width="10" height="10" fill="#000299"/><rect x="793" y="383" width="10" height="10" fill="#000199"/><rect x="803" y="383" width="80" height="10" fill="#000099"/><rect x="883" y="383" width="10" height="10" fill="#050099"/><rect x="893" y="383" width="10" height="10" fill="#0b0099"/><rect x="903" y="383" width="10" height="10" fill="#100099"/><rect x="913" y="383" width="10" height="10" fill="#160099"/><rect x="923" y="383" width="10" height="10" fill="#1c0099"/><rect x="933" y="383" width="10" height="10" fill="#210099"/><rect x="943" y="383" width="10" height="10" fill="#270099"/><rect x="953" y="383" width="10" height="10" fill="#2d0099"/><rect x="963" y="383" width="10" height="10" fill="#330099"/><rect x="973" y="383" width="10" height="10" fill="#390099"/><rect x="983" y="383" width="10" height="10" fill="#3e0099"/><rect x="993" y="383" width="10" height="10" fill="#440099"/><rect x="1003" y="383" width="10" height="10" fill="#4a0099"/><rect x="1013" y="383" width="10" height="10" fill="#500099"/><rect x="1023" y="383" width="10" height="10" fill="#570099"/><rect x="1033" y="383" width="10" height="10" fill="#5d0099"/><rect x="1043" y="383" width="10" height="10" fill="#630099"/><rect x="1053" y="383" width="10" height="10" fill="#690099"/><rect x="1063" y="383" width="10" height="10" fill="#6f0099"/><rect x="1073" y="383" width="10" height="10" fill="#750099"/><rect x="1083" y="383" width="10" height="10" fill="#7c0099"/><rect x="1093" y="383" width="10" height="10" fill="#820099"/><rect x="1103" y="383" width="10" height="10" fill="#890099"/><rect x="1113" y="383" width="10" height="10" fill="#8f0099"/><rect x="1123" y="383" width="10" height="10" fill="#950099"/><rect x="1133" y="383" width="10" height="10" fill="#990095"/><rect x="1143" y="383" width="10" height="10" fill="#99008f"/><rect x="1153" y="383" width="10" height="10" fill="#990089"/><rect x="1163" y="383" width="10" height="10" fill="#990084"/><rect x="1173" y="383" width="10" height="10" fill="#99007f"/><rect x="1183" y="383" width="10" height="10" fill="#99007b"/><rect x="1193" y="383" width="1" height="10" fill="#990077"/><rect x="733" y="393" width="10" height="10" fill="#000899"/><rect x="743" y="393" width="10" height="10" fill="#000799"/><rect x="753" y="393" width="10" height="10" fill="#000599"/><rect x="763" y="393" width="10" height="10" fill="#000499"/><rect x="773" y="393" width="10" height="10" fill="#000299"/><rect x="783" y="393" width="10" height="10" fill="#000199"/><rect x="793" y="393" width="90" height="10" fill="#000099"/><rect x="883" y="393" width="10" height="10" fill="#040099"/><rect x="893" y="393" width="10" height="10" fill="#090099"/><rect x="903" y="393" width="10" height="10" fill="#0f0099"/><rect x="913" y="393" width="10" height="10" fill="#140099"/><rect x="923" y="393" width="10" height="10" fill="#1a0099"/><rect x="933" y="393" width="10" height="10" fill="#1f0099"/><rect x="943" y="393" width="10" height="10" fill="#250099"/><rect x="953" y="393" width="10" height="10" fill="#2a0099"/><rect x="963" y="393" width="10" height="10" fill="#300099"/><rect x="973" y="393" width="10" height="10" fill="#360099"/><rect x="983" y="393" width="10" height="10" fill="#3b0099"/><rect x="993" y="393" width="10" height="10" fill="#410099"/><rect x="1003" y="393" width="10" height="10" fill="#470099"/><rect x="1013" y="393" width="10" height="10" fill="#4d0099"/><rect x="1023" y="393" width="10" height="10" fill="#530099"/><rect x="1033" y="393" width="10" height="10" fill="#590099"/><rect x="1043" y="393" width="10" height="10" fill="#5e0099"/><rect x="1053" y="393" width="10" height="10" fill="#640099"/><rect x="1063" y="393" width="10" height="10" fill="#6a0099"/><rect x="1073" y="393" width="10" height="10" fill="#700099"/><rect x="1083" y="393" width="10" height="10" fill="#770099"/><rect x="1093" y="393" width="10" height="10" fill="#7d0099"/><rect x="1103" y="393" width="10" height="10" fill="#830099"/><rect x="1113" y="393" width="10" height="10" fill="#890099"/><rect x="1123" y="393" width="10" height="10" fill="#8f0099"/><rect x="1133" y="393" width="10" height="10" fill="#960099"/><rect x="1143" y="393" width="10" height="10" fill="#990095"/><rect x="1153" y="393" width="10" height="10" fill="#99008f"/><rect x="1163" y="393" width="10" height="10" fill="#99008a"/><rect x="1173" y="393" width="10" height="10" fill="#990085"/><rect x="1183" y="393" width="10" height="10" fill="#990080"/><rect x="1193" y="393" width="1" height="10" fill="#99007c"/><rect x="733" y="403" width="10" height="10" fill="#000699"/><rect x="743" y="403" width="10" height="10" fill="#000599"/><rect x="753" y="403" width="10" height="10" fill="#000499"/><rect x="763" y="403" width="10" height="10" fill="#000299"/><rect x="773" y="403" width="10" height="10" fill="#000199"/><rect x="783" y="403" width="100" height="10" fill="#000099"/><rect x="883" y="403" width="10" height="10" fill="#030099"/><rect x="893" y="403" width="10" height="10" fill="#080099"/><rect x="903" y="403" width="10" height="10" fill="#0d0099"/><rect x="913" y="403" width="10" height="10" fill="#130099"/><rect x="923" y="403" width="10" height="10" fill="#180099"/><rect x="933" y="403" width="10" height="10" fill="#1d0099"/><rect x="943" y="403" width="10" height="10" fill="#230099"/><rect x="953" y="403" width="10" height="10" fill="#280099"/><rect x="963" y="403" width="10" height="10" fill="#2e0099"/><rect x="973" y="403" width="10" height="10" fill="#330099"/><rect x="983" y="403" width="10" height="10" fill="#390099"/><rect x="993" y="403" width="10" height="10" fill="#3e0099"/><rect x="1003" y="403" width="10" height="10" fill="#440099"/><rect x="1013" y="403" width="10" height="10" fill="#490099"/><rect x="1023" y="403" width="10" height="10" fill="#4f0099"/><rect x="1033" y="403" width="10" height="10" fill="#550099"/><rect x="1043" y="403" width="10" height="10" fill="#5a0099"/><rect x="1053" y="403" width="10" height="10" fill="#600099"/><rect x="1063" y="403" width="10" height="10" fill="#660099"/><rect x="1073" y="403" width="10" height="10" fill="#6c0099"/><rect x="1083" y="403" width="10" height="10" fill="#720099"/><rect x="1093" y="403" width="10" height="10" fill="#780099"/><rect x="1103" y="403" width="10" height="10" fill="#7e0099"/><rect x="1113" y="403" width="10" height="10" fill="#830099"/><rect x="1123" y="403" width="10" height="10" fill="#890099"/><rect x="1133" y="403" width="10" height="10" fill="#900099"/><rect x="1143" y="403" width="10" height="10" fill="#960099"/><rect x="1153" y="403" width="10" height="10" fill="#990095"/><rect x="1163" y="403" width="10" height="10" fill="#990090"/><rect x="1173" y="403" width="10" height="10" fill="#99008a"/><rect x="1183" y="403" width="10" height="10" fill="#990085"/><rect x="1193" y="403" width="1" height="10" fill="#990081"/><rect x="733" y="413" width="10" height="6" fill="#000599"/><rect x="743" y="413" width="10" height="6" fill="#000499"/><rect x="753" y="413" width="10" height="6" fill="#000299"/><rect x="763" y="413" width="10" height="6" fill="#000199"/><rect x="773" y="413" width="110" height="6" fill="#000099"/><rect x="883" y="413" width="10" height="6" fill="#020099"/><rect x="893" y="413" width="10" height="6" fill="#070099"/><rect x="903" y="413" width="10" height="6" fill="#0c0099"/><rect x="913" y="413" width="10" height="6" fill="#110099"/><rect x="923" y="413" width="10" height="6" fill="#170099"/><rect x="933" y="413" width="10" height="6" fill="#1c0099"/><rect x="943" y="413" width="10" height="6" fill="#210099"/><rect x="953" y="413" width="10" height="6" fill="#260099"/><rect x="963" y="413" width="10" height="6" fill="#2b0099"/><rect x="973" y="413" width="10" height="6" fill="#310099"/><rect x="983" y="413" width="10" height="6" fill="#360099"/><rect x="993" y="413" width="10" height="6" fill="#3b0099"/><rect x="1003" y="413" width="10" height="6" fill="#410099"/><rect x="1013" y="413" width="10" height="6" fill="#460099"/><rect x="1023" y="413" width="10" height="6" fill="#4c0099"/><rect x="1033" y="413" width="10" height="6" fill="#510099"/><rect x="1043" y="413" width="10" height="6" fill="#570099"/><rect x="1053" y="413" width="10" height="6" fill="#5c0099"/><rect x="1063" y="413" width="10" height="6" fill="#620099"/><rect x="1073" y="413" width="10" height="6" fill="#670099"/><rect x="1083" y="413" width="10" height="6" fill="#6d0099"/><rect x="1093" y="413" width="10" height="6" fill="#730099"/><rect x="1103" y="413" width="10" height="6" fill="#790099"/><rect x="1113" y="413" width="10" height="6" fill="#7e0099"/><rect x="1123" y="413" width="10" height="6" fill="#840099"/><rect x="1133" y="413" width="10" height="6" fill="#8a0099"/><rect x="1143" y="413" width="10" height="6" fill="#900099"/><rect x="1153" y="413" width="10" height="6" fill="#960099"/><rect x="1163" y="413" width="10" height="6" fill="#990095"/><rect x="1173" y="413" width="10" height="6" fill="#990090"/><rect x="1183" y="413" width="10" height="6" fill="#99008b"/><rect x="1193" y="413" width="1" height="6" fill="#990086"/></g><g><rect x="458" y="465" width="10" height="10" fill="#7affcc"/><rect x="468" y="465" width="10" height="10" fill="#80ffcb"/><rect x="478" y="465" width="10" height="10" fill="#87ffcb"/><rect x="488" y="465" width="10" height="10" fill="#8dffcb"/><rect x="498" y="465" width="10" height="10" fill="#94ffca"/><rect x="508" y="465" width="10" height="10" fill="#9bffca"/><rect x="518" y="465" width="10" height="10" fill="#a2ffca"/><rect x="528" y="465" width="10" height="10" fill="#a9ffca"/><rect x="538" y="465" width="10" height="10" fill="#b0ffc9"/><rect x="548" y="465" width="10" height="10" fill="#b7ffc9"/><rect x="558" y="465" width="10" height="10" fill="#beffc9"/><rect x="568" y="465" width="10" height="10" fill="#c6ffc8"/><rect x="578" y="465" width="10" height="10" fill="#cdffc8"/><rect x="588" y="465" width="10" height="10" fill="#d5ffc8"/><rect x="598" y="465" width="10" height="10" fill="#ddffc7"/><rect x="608" y="465" width="10" height="10" fill="#e4ffc7"/><rect x="618" y="465" width="10" height="10" fill="#ecffc6"/><rect x="628" y="465" width="10" height="10" fill="#f4ffc6"/><rect x="638" y="465" width="10" height="10" fill="#fcffc6"/><rect x="648" y="465" width="10" height="10" fill="#fff9c1"/><rect x="658" y="465" width="10" height="10" fill="#fff1ba"/><rect x="668" y="465" width="10" height="10" fill="#ffeab4"/><rect x="678" y="465" width="10" height="10" fill="#ffe3af"/><rect x="688" y="465" width="10" height="10" fill="#ffdca9"/><rect x="698" y="465" width="6" height="10" fill="#ffd6a4"/><rect x="458" y="475" width="10" height="10" fill="#7effd3"/><rect x="468" y="475" width="10" height="10" fill="#85ffd2"/><rect x="478" y="475" width="10" height="10" fill="#8cffd2"/><rect x="488" y="475" width="10" height="10" fill="#93ffd2"/><rect x="498" y="475" width="10" height="10" fill="#9affd1"/><rect x="508" y="475" width="10" height="10" fill="#a1ffd1"/><rect x="518" y="475" width="10" height="10" fill="#a8ffd1"/><rect x="528" y="475" width="10" height="10" fill="#afffd1"/><rect x="538" y="475" width="10" height="10" fill="#b6ffd0"/><rect x="548" y="475" width="10" height="10" fill="#bdffd0"/><rect x="558" y="475" width="10" height="10" fill="#c5ffd0"/><rect x="568" y="475" width="10" height="10" fill="#ccffcf"/><rect x="578" y="475" width="10" height="10" fill="#d4ffcf"/><rect x="588" y="475" width="10" height="10" fill="#dcffcf"/><rect x="598" y="475" width="10" height="10" fill="#e4ffcf"/><rect x="608" y="475" width="10" height="10" fill="#ecffce"/><rect x="618" y="475" width="10" height="10" fill="#f4ffce"/><rect x="628" y="475" width="10" height="10" fill="#fcffce"/><rect x="638" y="475" width="10" height="10" fill="#fff9c9"/><rect x="648" y="475" width="10" height="10" fill="#fff1c2"/><rect x="658" y="475" width="10" height="10" fill="#ffeabc"/><rect x="668" y="475" width="10" height="10" fill="#ffe2b6"/><rect x="678" y="475" width="10" height="10" fill="#ffdcb0"/><rect x="688" y="475" width="10" height="10" fill="#ffd5ab"/><rect x="698" y="475" width="6" height="10" fill="#ffcfa5"/><rect x="458" y="485" width="10" height="10" fill="#83ffda"/><rect x="468" y="485" width="10" height="10" fill="#8affd9"/><rect x="478" y="485" width="10" height="10" fill="#91ffd9"/><rect x="488" y="485" width="10" height="10" fill="#98ffd9"/><rect x="498" y="485" width="10" height="10" fill="#9fffd9"/><rect x="508" y="485" width="10" height="10" fill="#a6ffd8"/><rect x="518" y="485" width="10" height="10" fill="#aeffd8"/><rect x="528" y="485" width="10" height="10" fill="#b5ffd8"/><rect x="538" y="485" width="10" height="10" fill="#bcffd8"/><rect x="548" y="485" width="10" height="10" fill="#c4ffd8"/><rect x="558" y="485" width="10" height="10" fill="#ccffd7"/><rect x="568" y="485" width="10" height="10" fill="#d3ffd7"/><rect x="578" y="485" width="10" height="10" fill="#dbffd7"/><rect x="588" y="485" width="10" height="10" fill="#e3ffd7"/><rect x="598" y="485" width="10" height="10" fill="#ebffd6"/><rect x="608" y="485" width="10" height="10" fill="#f3ffd6"/><rect x="618" y="485" width="10" height="10" fill="#fcffd6"/><rect x="628" y="485" width="10" height="10" fill="#fff9d1"/><rect x="638" y="485" width="10" height="10" fill="#fff1ca"/><rect x="648" y="485" width="10" height="10" fill="#ffe9c3"/><rect x="658" y="485" width="10" height="10" fill="#ffe2bd"/><rect x="668" y="485" width="10" height="10" fill="#ffdbb7"/><rect x="678" y="485" width="10" height="10" fill="#ffd5b1"/><rect x="688" y="485" width="10" height="10" fill="#ffcfac"/><rect x="698" y="485" width="6" height="10" fill="#ffc9a7"/><rect x="458" y="495" width="10" height="10" fill="#89ffe1"/><rect x="468" y="495" width="10" height="10" fill="#8fffe1"/><rect x="478" y="495" width="10" height="10" fill="#97ffe1"/><rect x="488" y="495" width="10" height="10" fill="#9effe0"/><rect x="498" y="495" width="10" height="10" fill="#a5ffe0"/><rect x="508" y="495" width="10" height="10" fill="#acffe0"/><rect x="518" y="495" width="10" height="10" fill="#b4ffe0"/><rect x="528" y="495" width="10" height="10" fill="#bbffe0"/><rect x="538" y="495" width="10" height="10" fill="#c3ffdf"/><rect x="548" y="495" width="10" height="10" fill="#cbffdf"/><rect x="558" y="495" width="10" height="10" fill="#d3ffdf"/><rect x="568" y="495" width="10" height="10" fill="#dbffdf"/><rect x="578" y="495" width="10" height="10" fill="#e3ffdf"/><rect x="588" y="495" width="10" height="10" fill="#ebffde"/><rect x="598" y="495" width="10" height="10" fill="#f3ffde"/><rect x="608" y="495" width="10" height="10" fill="#fcffde"/><rect x="618" y="495" width="10" height="10" fill="#fff9d9"/><rect x="628" y="495" width="10" height="10" fill="#fff1d2"/><rect x="638" y="495" width="10" height="10" fill="#ffe9cb"/><rect x="648" y="495" width="10" height="10" fill="#ffe2c5"/><rect x="658" y="495" width="10" height="10" fill="#ffdbbe"/><rect x="668" y="495" width="10" height="10" fill="#ffd5b8"/><rect x="678" y="495" width="10" height="10" fill="#ffceb3"/><rect x="688" y="495" width="10" height="10" fill="#ffc8ad"/><rect x="698" y="495" width="6" height="10" fill="#ffc2a8"/><rect x="458" y="505" width="10" height="10" fill="#8effe9"/><rect x="468" y="505" width="10" height="10" fill="#95ffe8"/><rect x="478" y="505" width="10" height="10" fill="#9cffe8"/><rect x="488" y="505" width="10" height="10" fill="#a4ffe8"/><rect x="498" y="505" width="10" height="10" fill="#abffe8"/><rect x="508" y="505" width="10" height="10" fill="#b3ffe8"/><rect x="518" y="505" width="10" height="10" fill="#baffe8"/><rect x="528" y="505" width="10" height="10" fill="#c2ffe8"/><rect x="538" y="505" width="10" height="10" fill="#caffe8"/><rect x="548" y="505" width="10" height="10" fill="#d2ffe7"/><rect x="558" y="505" width="10" height="10" fill="#daffe7"/><rect x="568" y="505" width="10" height="10" fill="#e2ffe7"/><rect x="578" y="505" width="10" height="10" fill="#eaffe7"/><rect x="588" y="505" width="10" height="10" fill="#f3ffe7"/><rect x="598" y="505" width="10" height="10" fill="#fbffe7"/><rect x="608" y="505" width="10" height="10" fill="#fff9e2"/><rect x="618" y="505" width="10" height="10" fill="#fff1da"/><rect x="628" y="505" width="10" height="10" fill="#ffe9d3"/><rect x="638" y="505" width="10" height="10" fill="#ffe2cc"/><rect x="648" y="505" width="10" height="10" fill="#ffdbc6"/><rect x="658" y="505" width="10" height="10" fill="#ffd4c0"/><rect x="668" y="505" width="10" height="10" fill="#ffceba"/><rect x="678" y="505" width="10" height="10" fill="#ffc8b4"/><rect x="688" y="505" width="10" height="10" fill="#ffc2af"/><rect x="698" y="505" width="6" height="10" fill="#ffbca9"/><rect x="458" y="515" width="10" height="10" fill="#93fff1"/><rect x="468" y="515" width="10" height="10" fill="#9bfff0"/><rect x="478" y="515" width="10" height="10" fill="#a2fff0"/><rect x="488" y="515" width="10" height="10" fill="#aafff0"/><rect x="498" y="515" width="10" height="10" fill="#b1fff0"/><rect x="508" y="515" width="10" height="10" fill="#b9fff0"/><rect x="518" y="515" width="10" height="10" fill="#c1fff0"/><rect x="528" y="515" width="10" height="10" fill="#c9fff0"/><rect x="538" y="515" width="10" height="10" fill="#d1fff0"/><rect x="548" y="515" width="10" height="10" fill="#d9fff0"/><rect x="558" y="515" width="10" height="10" fill="#e1fff0"/><rect x="568" y="515" width="10" height="10" fill="#eafff0"/><rect x="578" y="515" width="10" height="10" fill="#f2fff0"/><rect x="588" y="515" width="10" height="10" fill="#fbffef"/><rect x="598" y="515" width="10" height="10" fill="#fff9eb"/><rect x="608" y="515" width="10" height="10" fill="#fff1e3"/><rect x="618" y="515" width="10" height="10" fill="#ffe9db"/><rect x="628" y="515" width="10" height="10" fill="#ffe2d4"/><rect x="638" y="515" width="10" height="10" fill="#ffdbcd"/><rect x="648" y="515" width="10" height="10" fill="#ffd4c7"/><rect x="658" y="515" width="10" height="10" fill="#ffcdc1"/><rect x="668" y="515" width="10" height="10" fill="#ffc7bb"/><rect x="678" y="515" width="10" height="10" fill="#ffc1b5"/><rect x="688" y="515" width="10" height="10" fill="#ffbcb0"/><rect x="698" y="515" width="6" height="10" fill="#ffb6ab"/><rect x="458" y="525" width="10" height="10" fill="#99fff9"/><rect x="468" y="525" width="10" height="10" fill="#a1fff9"/><rect x="478" y="525" width="10" height="10" fill="#a8fff9"/><rect x="488" y="525" width="10" height="10" fill="#b0fff9"/><rect x="498" y="525" width="10" height="10" fill="#b8fff9"/><rect x="508" y="525" width="10" height="10" fill="#c0fff9"/><rect x="518" y="525" width="10" height="10" fill="#c8fff9"/><rect x="528" y="525" width="10" height="10" fill="#d0fff9"/><rect x="538" y="525" width="10" height="10" fill="#d8fff9"/><rect x="548" y="525" width="10" height="10" fill="#e1fff9"/><rect x="558" y="525" width="10" height="10" fill="#e9fff9"/><rect x="568" y="525" width="10" height="10" fill="#f2fff8"/><rect x="578" y="525" width="10" height="10" fill="#fbfff8"/><rect x="588" y="525" width="10" height="10" fill="#fffaf4"/><rect x="598" y="525" width="10" height="10" fill="#fff1eb"/><rect x="608" y="525" width="10" height="10" fill="#ffe9e4"/><rect x="618" y="525" width="10" height="10" fill="#ffe2dc"/><rect x="628" y="525" width="10" height="10" fill="#ffdad5"/><rect x="638" y="525" width="10" height="10" fill="#ffd4ce"/><rect x="648" y="525" width="10" height="10" fill="#ffcdc8"/><rect x="658" y="525" width="10" height="10" fill="#ffc7c2"/><rect x="668" y="525" width="10" height="10" fill="#ffc1bc"/><rect x="678" y="525" width="10" height="10" fill="#ffbbb6"/><rect x="688" y="525" width="10" height="10" fill="#ffb6b1"/><rect x="698" y="525" width="6" height="10" fill="#ffb0ac"/><rect x="458" y="535" width="10" height="10" fill="#9dfcff"/><rect x="468" y="535" width="10" height="10" fill="#a5fcff"/><rect x="478" y="535" width="10" height="10" fill="#adfcff"/><rect x="488" y="535" width="10" height="10" fill="#b5fcff"/><rect x="498" y="535" width="10" height="10" fill="#bcfcff"/><rect x="508" y="535" width="10" height="10" fill="#c5fcff"/><rect x="518" y="535" width="10" height="10" fill="#cdfbff"/><rect x="528" y="535" width="10" height="10" fill="#d5fbff"/><rect x="538" y="535" width="10" height="10" fill="#ddfbff"/><rect x="548" y="535" width="10" height="10" fill="#e6fbff"/><rect x="558" y="535" width="10" height="10" fill="#eefbff"/><rect x="568" y="535" width="10" height="10" fill="#f7fbff"/><rect x="578" y="535" width="10" height="10" fill="#fffafd"/><rect x="588" y="535" width="10" height="10" fill="#fff1f4"/><rect x="598" y="535" width="10" height="10" fill="#ffe9ec"/><rect x="608" y="535" width="10" height="10" fill="#ffe1e5"/><rect x="618" y="535" width="10" height="10" fill="#ffdadd"/><rect x="628" y="535" width="10" height="10" fill="#ffd3d6"/><rect x="638" y="535" width="10" height="10" fill="#ffcdd0"/><rect x="648" y="535" width="10" height="10" fill="#ffc6c9"/><rect x="658" y="535" width="10" height="10" fill="#ffc0c3"/><rect x="668" y="535" width="10" height="10" fill="#ffbbbd"/><rect x="678" y="535" width="10" height="10" fill="#ffb5b8"/><rect x="688" y="535" width="10" height="10" fill="#ffb0b2"/><rect x="698" y="535" width="6" height="10" fill="#ffabad"/><rect x="458" y="545" width="10" height="10" fill="#9ef3ff"/><rect x="468" y="545" width="10" height="10" fill="#a6f3ff"/><rect x="478" y="545" width="10" height="10" fill="#adf3ff"/><rect x="488" y="545" width="10" height="10" fill="#b5f3ff"/><rect x="498" y="545" width="10" height="10" fill="#bdf3ff"/><rect x="508" y="545" width="10" height="10" fill="#c5f3ff"/><rect x="518" y="545" width="10" height="10" fill="#cdf3ff"/><rect x="528" y="545" width="10" height="10" fill="#d5f3ff"/><rect x="538" y="545" width="10" height="10" fill="#ddf2ff"/><rect x="548" y="545" width="10" height="10" fill="#e5f2ff"/><rect x="558" y="545" width="10" height="10" fill="#eef2ff"/><rect x="568" y="545" width="10" height="10" fill="#f7f2ff"/><rect x="578" y="545" width="10" height="10" fill="#fff1fe"/><rect x="588" y="545" width="10" height="10" fill="#ffe9f5"/><rect x="598" y="545" width="10" height="10" fill="#ffe1ed"/><rect x="608" y="545" width="10" height="10" fill="#ffdae5"/><rect x="618" y="545" width="10" height="10" fill="#ffd3de"/><rect x="628" y="545" width="10" height="10" fill="#ffccd7"/><rect x="638" y="545" width="10" height="10" fill="#ffc6d1"/><rect x="648" y="545" width="10" height="10" fill="#ffc0ca"/><rect x="658" y="545" width="10" height="10" fill="#ffbac4"/><rect x="668" y="545" width="10" height="10" fill="#ffb4be"/><rect x="678" y="545" width="10" height="10" fill="#ffafb9"/><rect x="688" y="545" width="10" height="10" fill="#ffaab4"/><rect x="698" y="545" width="6" height="10" fill="#ffa5af"/><rect x="458" y="555" width="10" height="10" fill="#9febff"/><rect x="468" y="555" width="10" height="10" fill="#a6ebff"/><rect x="478" y="555" width="10" height="10" fill="#aeebff"/><rect x="488" y="555" width="10" height="10" fill="#b5ebff"/><rect x="498" y="555" width="10" height="10" fill="#bdeaff"/><rect x="508" y="555" width="10" height="10" fill="#c5eaff"/><rect x="518" y="555" width="10" height="10" fill="#cdeaff"/><rect x="528" y="555" width="10" height="10" fill="#d5eaff"/><rect x="538" y="555" width="10" height="10" fill="#ddeaff"/><rect x="548" y="555" width="10" height="10" fill="#e5eaff"/><rect x="558" y="555" width="10" height="10" fill="#eee9ff"/><rect x="568" y="555" width="10" height="10" fill="#f6e9ff"/><rect x="578" y="555" width="10" height="10" fill="#ffe9fe"/><rect x="588" y="555" width="10" height="10" fill="#ffe1f6"/><rect x="598" y="555" width="10" height="10" fill="#ffdaee"/><rect x="608" y="555" width="10" height="10" fill="#ffd3e6"/><rect x="618" y="555" width="10" height="10" fill="#ffccdf"/><rect x="628" y="555" width="10" height="10" fill="#ffc5d8"/><rect x="638" y="555" width="10" height="10" fill="#ffbfd2"/><rect x="648" y="555" width="10" height="10" fill="#ffb9cb"/><rect x="658" y="555" width="10" height="10" fill="#ffb4c5"/><rect x="668" y="555" width="10" height="10" fill="#ffaec0"/><rect x="678" y="555" width="10" height="10" fill="#ffa9ba"/><rect x="688" y="555" width="10" height="10" fill="#ffa4b5"/><rect x="698" y="555" width="6" height="10" fill="#ff9fb0"/><rect x="458" y="565" width="10" height="10" fill="#a0e3ff"/><rect x="468" y="565" width="10" height="10" fill="#a7e3ff"/><rect x="478" y="565" width="10" height="10" fill="#aee3ff"/><rect x="488" y="565" width="10" height="10" fill="#b6e2ff"/><rect x="498" y="565" width="10" height="10" fill="#bde2ff"/><rect x="508" y="565" width="10" height="10" fill="#c5e2ff"/><rect x="518" y="565" width="10" height="10" fill="#cde2ff"/><rect x="528" y="565" width="10" height="10" fill="#d5e2ff"/><rect x="538" y="565" width="10" height="10" fill="#dde1ff"/><rect x="548" y="565" width="10" height="10" fill="#e5e1ff"/><rect x="558" y="565" width="10" height="10" fill="#ede1ff"/><rect x="568" y="565" width="10" height="10" fill="#f6e1ff"/><rect x="578" y="565" width="10" height="10" fill="#fee0ff"/><rect x="588" y="565" width="10" height="10" fill="#ffd9f7"/><rect x="598" y="565" width="10" height="10" fill="#ffd2ef"/><rect x="608" y="565" width="10" height="10" fill="#ffcbe7"/><rect x="618" y="565" width="10" height="10" fill="#ffc5e0"/><rect x="628" y="565" width="10" height="10" fill="#ffbfd9"/><rect x="638" y="565" width="10" height="10" fill="#ffb9d3"/><rect x="648" y="565" width="10" height="10" fill="#ffb3cc"/><rect x="658" y="565" width="10" height="10" fill="#ffadc6"/><rect x="668" y="565" width="10" height="10" fill="#ffa8c1"/><rect x="678" y="565" width="10" height="10" fill="#ffa3bb"/><rect x="688" y="565" width="10" height="10" fill="#ff9fb6"/><rect x="698" y="565" width="6" height="10" fill="#ff9ab1"/><rect x="458" y="575" width="10" height="10" fill="#a0dbff"/><rect x="468" y="575" width="10" height="10" fill="#a7dbff"/><rect x="478" y="575" width="10" height="10" fill="#afdbff"/><rect x="488" y="575" width="10" height="10" fill="#b6daff"/><rect x="498" y="575" width="10" height="10" fill="#bedaff"/><rect x="508" y="575" width="10" height="10" fill="#c5daff"/><rect x="518" y="575" width="10" height="10" fill="#cddaff"/><rect x="528" y="575" width="10" height="10" fill="#d5d9ff"/><rect x="538" y="575" width="10" height="10" fill="#ddd9ff"/><rect x="548" y="575" width="10" height="10" fill="#e5d9ff"/><rect x="558" y="575" width="10" height="10" fill="#edd9ff"/><rect x="568" y="575" width="10" height="10" fill="#f5d8ff"/><rect x="578" y="575" width="10" height="10" fill="#fdd8ff"/><rect x="588" y="575" width="10" height="10" fill="#ffd2f7"/><rect x="598" y="575" width="10" height="10" fill="#ffcbef"/><rect x="608" y="575" width="10" height="10" fill="#ffc4e8"/><rect x="618" y="575" width="10" height="10" fill="#ffbee1"/><rect x="628" y="575" width="10" height="10" fill="#ffb8da"/><rect x="638" y="575" width="10" height="10" fill="#ffb2d4"/><rect x="648" y="575" width="10" height="10" fill="#ffadcd"/><rect x="658" y="575" width="10" height="10" fill="#ffa7c7"/><rect x="668" y="575" width="10" height="10" fill="#ffa2c2"/><rect x="678" y="575" width="10" height="10" fill="#ff9ebc"/><rect x="688" y="575" width="10" height="10" fill="#ff99b7"/><rect x="698" y="575" width="6" height="10" fill="#ff95b2"/><rect x="458" y="585" width="10" height="10" fill="#a1d4ff"/><rect x="468" y="585" width="10" height="10" fill="#a8d3ff"/><rect x="478" y="585" width="10" height="10" fill="#afd3ff"/><rect x="488" y="585" width="10" height="10" fill="#b6d3ff"/><rect x="498" y="585" width="10" height="10" fill="#bed2ff"/><rect x="508" y="585" width="10" height="10" fill="#c5d2ff"/><rect x="518" y="585" width="10" height="10" fill="#cdd2ff"/><rect x="528" y="585" width="10" height="10" fill="#d5d2ff"/><rect x="538" y="585" width="10" height="10" fill="#dcd1ff"/><rect x="548" y="585" width="10" height="10" fill="#e4d1ff"/><rect x="558" y="585" width="10" height="10" fill="#ecd1ff"/><rect x="568" y="585" width="10" height="10" fill="#f5d0ff"/><rect x="578" y="585" width="10" height="10" fill="#fdd0ff"/><rect x="588" y="585" width="10" height="10" fill="#ffcaf8"/><rect x="598" y="585" width="10" height="10" fill="#ffc4f0"/><rect x="608" y="585" width="10" height="10" fill="#ffbde9"/><rect x="618" y="585" width="10" height="10" fill="#ffb7e2"/><rect x="628" y="585" width="10" height="10" fill="#ffb1db"/><rect x="638" y="585" width="10" height="10" fill="#ffacd5"/><rect x="648" y="585" width="10" height="10" fill="#ffa7ce"/><rect x="658" y="585" width="10" height="10" fill="#ffa2c9"/><rect x="668" y="585" width="10" height="10" fill="#ff9dc3"/><rect x="678" y="585" width="10" height="10" fill="#ff98bd"/><rect x="688" y="585" width="10" height="10" fill="#ff94b8"/><rect x="698" y="585" width="6" height="10" fill="#ff8fb3"/><rect x="458" y="595" width="10" height="10" fill="#a1ccff"/><rect x="468" y="595" width="10" height="10" fill="#a8ccff"/><rect x="478" y="595" width="10" height="10" fill="#b0ccff"/><rect x="488" y="595" width="10" height="10" fill="#b7cbff"/><rect x="498" y="595" width="10" height="10" fill="#becbff"/><rect x="508" y="595" width="10" height="10" fill="#c6cbff"/><rect x="518" y="595" width="10" height="10" fill="#cdcaff"/><rect x="528" y="595" width="10" height="10" fill="#d5caff"/><rect x="538" y="595" width="10" height="10" fill="#dcc9ff"/><rect x="548" y="595" width="10" height="10" fill="#e4c9ff"/><rect x="558" y="595" width="10" height="10" fill="#ecc9ff"/><rect x="568" y="595" width="10" height="10" fill="#f4c8ff"/><rect x="578" y="595" width="10" height="10" fill="#fcc8ff"/><rect x="588" y="595" width="10" height="10" fill="#ffc3f9"/><rect x="598" y="595" width="10" height="10" fill="#ffbdf1"/><rect x="608" y="595" width="10" height="10" fill="#ffb6ea"/><rect x="618" y="595" width="10" height="10" fill="#ffb1e3"/><rect x="628" y="595" width="10" height="10" fill="#ffabdc"/><rect x="638" y="595" width="10" height="10" fill="#ffa6d6"/><rect x="648" y="595" width="10" height="10" fill="#ffa1cf"/><rect x="658" y="595" width="10" height="10" fill="#ff9cca"/><rect x="668" y="595" width="10" height="10" fill="#ff97c4"/><rect x="678" y="595" width="10" height="10" fill="#ff93bf"/><rect x="688" y="595" width="10" height="10" fill="#ff8eb9"/><rect x="698" y="595" width="6" height="10" fill="#ff8ab4"/><rect x="458" y="605" width="10" height="3" fill="#a2c5ff"/><rect x="468" y="605" width="10" height="3" fill="#a9c5ff"/><rect x="478" y="605" width="10" height="3" fill="#b0c4ff"/><rect x="488" y="605" width="10" height="3" fill="#b7c4ff"/><rect x="498" y="605" width="10" height="3" fill="#bec4ff"/><rect x="508" y="605" width="10" height="3" fill="#c6c3ff"/><rect x="518" y="605" width="10" height="3" fill="#cdc3ff"/><rect x="528" y="605" width="10" height="3" fill="#d5c2ff"/><rect x="538" y="605" width="10" height="3" fill="#dcc2ff"/><rect x="548" y="605" width="10" height="3" fill="#e4c2ff"/><rect x="558" y="605" width="10" height="3" fill="#ecc1ff"/><rect x="568" y="605" width="10" height="3" fill="#f4c1ff"/><rect x="578" y="605" width="10" height="3" fill="#fcc0ff"/><rect x="588" y="605" width="10" height="3" fill="#ffbcf9"/><rect x="598" y="605" width="10" height="3" fill="#ffb6f2"/><rect x="608" y="605" width="10" height="3" fill="#ffb0ea"/><rect x="618" y="605" width="10" height="3" fill="#ffaae3"/><rect x="628" y="605" width="10" height="3" fill="#ffa5dd"/><rect x="638" y="605" width="10" height="3" fill="#ffa0d6"/><rect x="648" y="605" width="10" height="3" fill="#ff9bd0"/><rect x="658" y="605" width="10" height="3" fill="#ff96cb"/><rect x="668" y="605" width="10" height="3" fill="#ff92c5"/><rect x="678" y="605" width="10" height="3" fill="#ff8dc0"/><rect x="688" y="605" width="10" height="3" fill="#ff89ba"/><rect x="698" y="605" width="6" height="3" fill="#ff85b5"/></g></svg>
<canvas id="uv" width="461" height="356" style="left:733px;top:63px"></canvas>
<canvas id="xy" width="246" height="143" style="left:458px;top:465px"></canvas>
<svg width="1200" height="625" viewBox="0 0 1200 625"><defs><linearGradient id="rb" x1="0" y1="0" x2="0" y2="1"><stop offset="0" stop-color="#ff5050"/><stop offset="0.12" stop-color="#ff0000"/><stop offset="0.55" stop-color="#f00000"/><stop offset="1" stop-color="#6a0000"/></linearGradient></defs><defs><linearGradient id="bg0" x1="0" y1="0" x2="1" y2="0"><stop offset="0" stop-color="#c8c8c8"/><stop offset="0.5" stop-color="#c8c8c8"/><stop offset="1" stop-color="#8a8a8a"/></linearGradient><linearGradient id="bg1" x1="0" y1="0" x2="1" y2="0"><stop offset="0" stop-color="#d00000"/><stop offset="0.5" stop-color="#d00000"/><stop offset="1" stop-color="#7a0000"/></linearGradient><linearGradient id="bg2" x1="0" y1="0" x2="1" y2="0"><stop offset="0" stop-color="#00c000"/><stop offset="0.5" stop-color="#00c000"/><stop offset="1" stop-color="#007000"/></linearGradient><linearGradient id="bg3" x1="0" y1="0" x2="1" y2="0"><stop offset="0" stop-color="#0010d0"/><stop offset="0.5" stop-color="#0010d0"/><stop offset="1" stop-color="#000080"/></linearGradient><linearGradient id="bg4" x1="0" y1="0" x2="1" y2="0"><stop offset="0" stop-color="#00c0c0"/><stop offset="0.5" stop-color="#00c0c0"/><stop offset="1" stop-color="#007070"/></linearGradient><linearGradient id="bg5" x1="0" y1="0" x2="1" y2="0"><stop offset="0" stop-color="#c000c0"/><stop offset="0.5" stop-color="#c000c0"/><stop offset="1" stop-color="#700070"/></linearGradient><linearGradient id="bg6" x1="0" y1="0" x2="1" y2="0"><stop offset="0" stop-color="#c8c800"/><stop offset="0.5" stop-color="#c8c800"/><stop offset="1" stop-color="#707000"/></linearGradient><linearGradient id="bg7" x1="0" y1="0" x2="1" y2="0"><stop offset="0" stop-color="#ffffff"/><stop offset="0.5" stop-color="#ffffff"/><stop offset="1" stop-color="#9a9a9a"/></linearGradient></defs><text x="16.5" y="32.7" font-size="23.5" fill="#f4f4f4" stroke="#f4f4f4" stroke-width="0.35" text-anchor="start" textLength="148.5" lengthAdjust="spacingAndGlyphs" >sRGB PROFILE</text><text x="5.2" y="66.7" font-size="27" fill="#f4f4f4" stroke="#f4f4f4" stroke-width="0.35" text-anchor="start" textLength="164.3" lengthAdjust="spacingAndGlyphs" >Color Gamut</text><text x="88.3" y="115.8" font-size="14" fill="#ececec" stroke="#ececec" stroke-width="0.25" text-anchor="start" textLength="77" lengthAdjust="spacingAndGlyphs" >dE Formula:</text><text x="175.3" y="115.8" font-size="12" fill="#e8e8e8" stroke="#e8e8e8" stroke-width="0.25" text-anchor="start" textLength="24" lengthAdjust="spacingAndGlyphs" >2000</text><path d="M257.8 109 L264.6 109 L261.2 113 Z" fill="#080808"/><text x="105.8" y="139.5" font-size="11" fill="#dcdcdc" stroke="#dcdcdc" stroke-width="0.25" text-anchor="start" textLength="56.7" lengthAdjust="spacingAndGlyphs" >DeltaE 2000</text><line x1="45.6" y1="142.6" x2="45.6" y2="415.8" stroke="#9a9a9a" stroke-width="1.5"/><line x1="77.7" y1="142.6" x2="77.7" y2="415.8" stroke="#9a9a9a" stroke-width="1.5"/><line x1="109.9" y1="142.6" x2="109.9" y2="415.8" stroke="#9a9a9a" stroke-width="1.5"/><line x1="142.0" y1="142.6" x2="142.0" y2="415.8" stroke="#9a9a9a" stroke-width="1.5"/><line x1="174.2" y1="142.6" x2="174.2" y2="415.8" stroke="#9a9a9a" stroke-width="1.5"/><line x1="206.4" y1="142.6" x2="206.4" y2="415.8" stroke="#9a9a9a" stroke-width="1.5"/><line x1="238.5" y1="142.6" x2="238.5" y2="415.8" stroke="#9a9a9a" stroke-width="1.5"/><text x="13.4" y="427.3" font-size="10" fill="#dcdcdc" stroke="#dcdcdc" stroke-width="0.25" text-anchor="middle" >0</text><text x="45.6" y="427.3" font-size="10" fill="#dcdcdc" stroke="#dcdcdc" stroke-width="0.25" text-anchor="middle" >2</text><text x="77.7" y="427.3" font-size="10" fill="#dcdcdc" stroke="#dcdcdc" stroke-width="0.25" text-anchor="middle" >4</text><text x="109.9" y="427.3" font-size="10" fill="#dcdcdc" stroke="#dcdcdc" stroke-width="0.25" text-anchor="middle" >6</text><text x="142.0" y="427.3" font-size="10" fill="#dcdcdc" stroke="#dcdcdc" stroke-width="0.25" text-anchor="middle" >8</text><text x="174.2" y="427.3" font-size="10" fill="#dcdcdc" stroke="#dcdcdc" stroke-width="0.25" text-anchor="middle" >10</text><text x="206.4" y="427.3" font-size="10" fill="#dcdcdc" stroke="#dcdcdc" stroke-width="0.25" text-anchor="middle" >12</text><text x="238.5" y="427.3" font-size="10" fill="#dcdcdc" stroke="#dcdcdc" stroke-width="0.25" text-anchor="middle" >14</text><line x1="13.4" y1="411.8" x2="13.4" y2="415.8" stroke="#9a9a9a" stroke-width="1.5"/><rect x="13.4" y="142.6" width="241.2" height="269.20000000000005" fill="none" stroke="#9a9a9a" stroke-width="1.5"/><path d="M14.2 381.7 H34.7 V406.3 H14.2" fill="url(#bg0)" stroke="#0a0a0a" stroke-width="1.4"/><path d="M14.2 348.0 H32.0 V372.6 H14.2" fill="url(#bg1)" stroke="#0a0a0a" stroke-width="1.4"/><path d="M14.2 314.4 H23.8 V339.0 H14.2" fill="url(#bg2)" stroke="#0a0a0a" stroke-width="1.4"/><path d="M14.2 280.7 H28.3 V305.3 H14.2" fill="url(#bg3)" stroke="#0a0a0a" stroke-width="1.4"/><path d="M14.2 247.1 H23.8 V271.7 H14.2" fill="url(#bg4)" stroke="#0a0a0a" stroke-width="1.4"/><path d="M14.2 213.4 H24.8 V238.0 H14.2" fill="url(#bg5)" stroke="#0a0a0a" stroke-width="1.4"/><path d="M14.2 179.8 H17.4 V204.4 H14.2" fill="url(#bg6)" stroke="#0a0a0a" stroke-width="1.4"/><path d="M14.2 146.1 H30.8 V170.7 H14.2" fill="url(#bg7)" stroke="#0a0a0a" stroke-width="1.4"/><text x="320.7" y="61" font-size="11" fill="#dcdcdc" stroke="#dcdcdc" stroke-width="0.25" text-anchor="start" textLength="29.4" lengthAdjust="spacingAndGlyphs" >DeltaL</text><line x1="289.1" y1="65.0" x2="396.9" y2="65.0" stroke="#9a9a9a" stroke-width="1.5"/><text x="288.3" y="69.6" font-size="11" fill="#dcdcdc" stroke="#dcdcdc" stroke-width="0.25" text-anchor="end" >15</text><line x1="289.1" y1="103.0" x2="396.9" y2="103.0" stroke="#9a9a9a" stroke-width="1.5"/><text x="288.3" y="107.6" font-size="11" fill="#dcdcdc" stroke="#dcdcdc" stroke-width="0.25" text-anchor="end" >10</text><line x1="289.1" y1="141.0" x2="396.9" y2="141.0" stroke="#9a9a9a" stroke-width="1.5"/><text x="288.3" y="145.6" font-size="11" fill="#dcdcdc" stroke="#dcdcdc" stroke-width="0.25" text-anchor="end" >5</text><line x1="289.1" y1="179.0" x2="396.9" y2="179.0" stroke="#9a9a9a" stroke-width="1.5"/><text x="288.3" y="183.6" font-size="11" fill="#dcdcdc" stroke="#dcdcdc" stroke-width="0.25" text-anchor="end" >0</text><line x1="289.1" y1="217.0" x2="396.9" y2="217.0" stroke="#9a9a9a" stroke-width="1.5"/><text x="288.3" y="221.6" font-size="11" fill="#dcdcdc" stroke="#dcdcdc" stroke-width="0.25" text-anchor="end" >-5</text><line x1="289.1" y1="255.0" x2="396.9" y2="255.0" stroke="#9a9a9a" stroke-width="1.5"/><text x="288.3" y="259.6" font-size="11" fill="#dcdcdc" stroke="#dcdcdc" stroke-width="0.25" text-anchor="end" >-10</text><line x1="289.1" y1="293.0" x2="396.9" y2="293.0" stroke="#9a9a9a" stroke-width="1.5"/><text x="288.3" y="297.6" font-size="11" fill="#dcdcdc" stroke="#dcdcdc" stroke-width="0.25" text-anchor="end" >-15</text><line x1="292.6" y1="65.0" x2="292.6" y2="296.8" stroke="#9a9a9a" stroke-width="1.5"/><line x1="396.9" y1="65.0" x2="396.9" y2="296.8" stroke="#9a9a9a" stroke-width="1.5"/><text x="344.8" y="304.9" font-size="10.5" fill="#dcdcdc" stroke="#dcdcdc" stroke-width="0.25" text-anchor="middle" textLength="27.5" lengthAdjust="spacingAndGlyphs" >100W</text><line x1="303.3" y1="179.0" x2="386.59999999999997" y2="179.0" stroke="#080808" stroke-width="2"/><text x="462.5" y="61" font-size="11" fill="#dcdcdc" stroke="#dcdcdc" stroke-width="0.25" text-anchor="start" textLength="31" lengthAdjust="spacingAndGlyphs" >DeltaC</text><line x1="432.0" y1="65.0" x2="539.2" y2="65.0" stroke="#9a9a9a" stroke-width="1.5"/><text x="431.2" y="69.6" font-size="11" fill="#dcdcdc" stroke="#dcdcdc" stroke-width="0.25" text-anchor="end" >15</text><line x1="432.0" y1="103.0" x2="539.2" y2="103.0" stroke="#9a9a9a" stroke-width="1.5"/><text x="431.2" y="107.6" font-size="11" fill="#dcdcdc" stroke="#dcdcdc" stroke-width="0.25" text-anchor="end" >10</text><line x1="432.0" y1="141.0" x2="539.2" y2="141.0" stroke="#9a9a9a" stroke-width="1.5"/><text x="431.2" y="145.6" font-size="11" fill="#dcdcdc" stroke="#dcdcdc" stroke-width="0.25" text-anchor="end" >5</text><line x1="432.0" y1="179.0" x2="539.2" y2="179.0" stroke="#9a9a9a" stroke-width="1.5"/><text x="431.2" y="183.6" font-size="11" fill="#dcdcdc" stroke="#dcdcdc" stroke-width="0.25" text-anchor="end" >0</text><line x1="432.0" y1="217.0" x2="539.2" y2="217.0" stroke="#9a9a9a" stroke-width="1.5"/><text x="431.2" y="221.6" font-size="11" fill="#dcdcdc" stroke="#dcdcdc" stroke-width="0.25" text-anchor="end" >-5</text><line x1="432.0" y1="255.0" x2="539.2" y2="255.0" stroke="#9a9a9a" stroke-width="1.5"/><text x="431.2" y="259.6" font-size="11" fill="#dcdcdc" stroke="#dcdcdc" stroke-width="0.25" text-anchor="end" >-10</text><line x1="432.0" y1="293.0" x2="539.2" y2="293.0" stroke="#9a9a9a" stroke-width="1.5"/><text x="431.2" y="297.6" font-size="11" fill="#dcdcdc" stroke="#dcdcdc" stroke-width="0.25" text-anchor="end" >-15</text><line x1="435.5" y1="65.0" x2="435.5" y2="296.8" stroke="#9a9a9a" stroke-width="1.5"/><line x1="539.2" y1="65.0" x2="539.2" y2="296.8" stroke="#9a9a9a" stroke-width="1.5"/><text x="487.4" y="304.9" font-size="10.5" fill="#dcdcdc" stroke="#dcdcdc" stroke-width="0.25" text-anchor="middle" textLength="27.5" lengthAdjust="spacingAndGlyphs" >100W</text><rect x="446.5" y="172.8" width="81.7" height="6" fill="#ffffff" stroke="#050505" stroke-width="1.3" rx="0.8"/><text x="604.5" y="61" font-size="11" fill="#dcdcdc" stroke="#dcdcdc" stroke-width="0.25" text-anchor="start" textLength="31" lengthAdjust="spacingAndGlyphs" >DeltaH</text><line x1="573.8" y1="65.0" x2="681.2" y2="65.0" stroke="#9a9a9a" stroke-width="1.5"/><text x="573.0" y="69.6" font-size="11" fill="#dcdcdc" stroke="#dcdcdc" stroke-width="0.25" text-anchor="end" >15</text><line x1="573.8" y1="103.0" x2="681.2" y2="103.0" stroke="#9a9a9a" stroke-width="1.5"/><text x="573.0" y="107.6" font-size="11" fill="#dcdcdc" stroke="#dcdcdc" stroke-width="0.25" text-anchor="end" >10</text><line x1="573.8" y1="141.0" x2="681.2" y2="141.0" stroke="#9a9a9a" stroke-width="1.5"/><text x="573.0" y="145.6" font-size="11" fill="#dcdcdc" stroke="#dcdcdc" stroke-width="0.25" text-anchor="end" >5</text><line x1="573.8" y1="179.0" x2="681.2" y2="179.0" stroke="#9a9a9a" stroke-width="1.5"/><text x="573.0" y="183.6" font-size="11" fill="#dcdcdc" stroke="#dcdcdc" stroke-width="0.25" text-anchor="end" >0</text><line x1="573.8" y1="217.0" x2="681.2" y2="217.0" stroke="#9a9a9a" stroke-width="1.5"/><text x="573.0" y="221.6" font-size="11" fill="#dcdcdc" stroke="#dcdcdc" stroke-width="0.25" text-anchor="end" >-5</text><line x1="573.8" y1="255.0" x2="681.2" y2="255.0" stroke="#9a9a9a" stroke-width="1.5"/><text x="573.0" y="259.6" font-size="11" fill="#dcdcdc" stroke="#dcdcdc" stroke-width="0.25" text-anchor="end" >-10</text><line x1="573.8" y1="293.0" x2="681.2" y2="293.0" stroke="#9a9a9a" stroke-width="1.5"/><text x="573.0" y="297.6" font-size="11" fill="#dcdcdc" stroke="#dcdcdc" stroke-width="0.25" text-anchor="end" >-15</text><line x1="577.3" y1="65.0" x2="577.3" y2="296.8" stroke="#9a9a9a" stroke-width="1.5"/><line x1="681.2" y1="65.0" x2="681.2" y2="296.8" stroke="#9a9a9a" stroke-width="1.5"/><text x="629.2" y="304.9" font-size="10.5" fill="#dcdcdc" stroke="#dcdcdc" stroke-width="0.25" text-anchor="middle" textLength="27.5" lengthAdjust="spacingAndGlyphs" >100W</text><line x1="588.0" y1="179.0" x2="670.9000000000001" y2="179.0" stroke="#080808" stroke-width="2"/><rect x="282.5" y="321.9" width="44" height="95.1" fill="#c0c0c0"/><rect x="282.5" y="321.9" width="44" height="47.5" fill="#c4c2c0"/><rect x="282.5" y="321.9" width="44" height="95.1" fill="none" stroke="#e6e6e6" stroke-width="1"/><text x="304.5" y="428.2" font-size="9.8" fill="#f0f0f0" stroke="#f0f0f0" stroke-width="0.25" text-anchor="middle" textLength="22.5" lengthAdjust="spacingAndGlyphs" >White</text><rect x="334.5" y="321.9" width="44" height="95.1" fill="#bc0000"/><rect x="334.5" y="321.9" width="44" height="47.5" fill="#bb0000"/><rect x="334.5" y="321.9" width="44" height="95.1" fill="none" stroke="#e6e6e6" stroke-width="1"/><text x="356.5" y="428.2" font-size="9.8" fill="#f0f0f0" stroke="#f0f0f0" stroke-width="0.25" text-anchor="middle" textLength="16.2" lengthAdjust="spacingAndGlyphs" >Red</text><rect x="386.5" y="321.9" width="44" height="95.1" fill="#00c000"/><rect x="386.5" y="321.9" width="44" height="47.5" fill="#1ec000"/><rect x="386.5" y="321.9" width="44" height="95.1" fill="none" stroke="#e6e6e6" stroke-width="1"/><text x="408.5" y="428.2" font-size="9.8" fill="#f0f0f0" stroke="#f0f0f0" stroke-width="0.25" text-anchor="middle" textLength="24.5" lengthAdjust="spacingAndGlyphs" >Green</text><rect x="438.5" y="321.9" width="44" height="95.1" fill="#1010c0"/><rect x="438.5" y="321.9" width="44" height="47.5" fill="#0018c0"/><rect x="438.5" y="321.9" width="44" height="95.1" fill="none" stroke="#e6e6e6" stroke-width="1"/><text x="460.5" y="428.2" font-size="9.8" fill="#f0f0f0" stroke="#f0f0f0" stroke-width="0.25" text-anchor="middle" textLength="17.7" lengthAdjust="spacingAndGlyphs" >Blue</text><rect x="490.5" y="321.9" width="44" height="95.1" fill="#00c0c0"/><rect x="490.5" y="321.9" width="44" height="47.5" fill="#28c4c0"/><rect x="490.5" y="321.9" width="44" height="95.1" fill="none" stroke="#e6e6e6" stroke-width="1"/><text x="512.5" y="428.2" font-size="9.8" fill="#f0f0f0" stroke="#f0f0f0" stroke-width="0.25" text-anchor="middle" textLength="20.6" lengthAdjust="spacingAndGlyphs" >Cyan</text><rect x="542.5" y="321.9" width="44" height="95.1" fill="#c000c0"/><rect x="542.5" y="321.9" width="44" height="47.5" fill="#c010c8"/><rect x="542.5" y="321.9" width="44" height="95.1" fill="none" stroke="#e6e6e6" stroke-width="1"/><text x="564.5" y="428.2" font-size="9.8" fill="#f0f0f0" stroke="#f0f0f0" stroke-width="0.25" text-anchor="middle" textLength="34.3" lengthAdjust="spacingAndGlyphs" >Magenta</text><rect x="594.5" y="321.9" width="44" height="95.1" fill="#c0c000"/><rect x="594.5" y="321.9" width="44" height="47.5" fill="#c4c000"/><rect x="594.5" y="321.9" width="44" height="95.1" fill="none" stroke="#e6e6e6" stroke-width="1"/><text x="616.5" y="428.2" font-size="9.8" fill="#f0f0f0" stroke="#f0f0f0" stroke-width="0.25" text-anchor="middle" textLength="25.2" lengthAdjust="spacingAndGlyphs" >Yellow</text><rect x="646.5" y="321.9" width="44" height="95.1" fill="#fdfdfd"/><rect x="646.5" y="321.9" width="44" height="47.5" fill="#ffffff"/><rect x="646.5" y="321.9" width="44" height="95.1" fill="none" stroke="#e6e6e6" stroke-width="1"/><text x="668.5" y="428.2" font-size="9.8" fill="#f0f0f0" stroke="#f0f0f0" stroke-width="0.25" text-anchor="middle" textLength="23.0" lengthAdjust="spacingAndGlyphs" >100W</text><text transform="translate(279.3 342.2) rotate(-90)" font-size="9.5" fill="#f0f0f0" text-anchor="middle" textLength="25" lengthAdjust="spacingAndGlyphs">Actual</text><text transform="translate(279.3 396.3) rotate(-90)" font-size="9.5" fill="#f0f0f0" text-anchor="middle" textLength="25" lengthAdjust="spacingAndGlyphs">Target</text><text x="920.8" y="59.8" font-size="11" fill="#dcdcdc" stroke="#dcdcdc" stroke-width="0.25" text-anchor="start" textLength="60.5" lengthAdjust="spacingAndGlyphs" >CIE 1976 u'v'</text><line x1="729.3000000000001" y1="418.7" x2="733.1" y2="418.7" stroke="#9a9a9a" stroke-width="1.4"/><text x="728.5" y="423.0" font-size="10.8" fill="#dcdcdc" stroke="#dcdcdc" stroke-width="0.25" text-anchor="end" >0</text><line x1="733.1" y1="418.5" x2="733.1" y2="422.8" stroke="#9a9a9a" stroke-width="1.4"/><text x="733.1" y="434.5" font-size="10.8" fill="#dcdcdc" stroke="#dcdcdc" stroke-width="0.25" text-anchor="middle" >0</text><line x1="729.3000000000001" y1="389.2" x2="733.1" y2="389.2" stroke="#9a9a9a" stroke-width="1.4"/><text x="728.5" y="393.5" font-size="10.8" fill="#dcdcdc" stroke="#dcdcdc" stroke-width="0.25" text-anchor="end" >0,05</text><line x1="771.5" y1="418.5" x2="771.5" y2="422.8" stroke="#9a9a9a" stroke-width="1.4"/><text x="771.5" y="434.5" font-size="10.8" fill="#dcdcdc" stroke="#dcdcdc" stroke-width="0.25" text-anchor="middle" >0,05</text><line x1="729.3000000000001" y1="359.6" x2="733.1" y2="359.6" stroke="#9a9a9a" stroke-width="1.4"/><text x="728.5" y="363.9" font-size="10.8" fill="#dcdcdc" stroke="#dcdcdc" stroke-width="0.25" text-anchor="end" >0,1</text><line x1="809.9" y1="418.5" x2="809.9" y2="422.8" stroke="#9a9a9a" stroke-width="1.4"/><text x="809.9" y="434.5" font-size="10.8" fill="#dcdcdc" stroke="#dcdcdc" stroke-width="0.25" text-anchor="middle" >0,1</text><line x1="729.3000000000001" y1="330.1" x2="733.1" y2="330.1" stroke="#9a9a9a" stroke-width="1.4"/><text x="728.5" y="334.4" font-size="10.8" fill="#dcdcdc" stroke="#dcdcdc" stroke-width="0.25" text-anchor="end" >0,15</text><line x1="848.3" y1="418.5" x2="848.3" y2="422.8" stroke="#9a9a9a" stroke-width="1.4"/><text x="848.3" y="434.5" font-size="10.8" fill="#dcdcdc" stroke="#dcdcdc" stroke-width="0.25" text-anchor="middle" >0,15</text><line x1="729.3000000000001" y1="300.6" x2="733.1" y2="300.6" stroke="#9a9a9a" stroke-width="1.4"/><text x="728.5" y="304.9" font-size="10.8" fill="#dcdcdc" stroke="#dcdcdc" stroke-width="0.25" text-anchor="end" >0,2</text><line x1="886.7" y1="418.5" x2="886.7" y2="422.8" stroke="#9a9a9a" stroke-width="1.4"/><text x="886.7" y="434.5" font-size="10.8" fill="#dcdcdc" stroke="#dcdcdc" stroke-width="0.25" text-anchor="middle" >0,2</text><line x1="729.3000000000001" y1="271.1" x2="733.1" y2="271.1" stroke="#9a9a9a" stroke-width="1.4"/><text x="728.5" y="275.4" font-size="10.8" fill="#dcdcdc" stroke="#dcdcdc" stroke-width="0.25" text-anchor="end" >0,25</text><line x1="925.1" y1="418.5" x2="925.1" y2="422.8" stroke="#9a9a9a" stroke-width="1.4"/><text x="925.1" y="434.5" font-size="10.8" fill="#dcdcdc" stroke="#dcdcdc" stroke-width="0.25" text-anchor="middle" >0,25</text><line x1="729.3000000000001" y1="241.5" x2="733.1" y2="241.5" stroke="#9a9a9a" stroke-width="1.4"/><text x="728.5" y="245.8" font-size="10.8" fill="#dcdcdc" stroke="#dcdcdc" stroke-width="0.25" text-anchor="end" >0,3</text><line x1="963.5" y1="418.5" x2="963.5" y2="422.8" stroke="#9a9a9a" stroke-width="1.4"/><text x="963.5" y="434.5" font-size="10.8" fill="#dcdcdc" stroke="#dcdcdc" stroke-width="0.25" text-anchor="middle" >0,3</text><line x1="729.3000000000001" y1="212.0" x2="733.1" y2="212.0" stroke="#9a9a9a" stroke-width="1.4"/><text x="728.5" y="216.3" font-size="10.8" fill="#dcdcdc" stroke="#dcdcdc" stroke-width="0.25" text-anchor="end" >0,35</text><line x1="1001.9" y1="418.5" x2="1001.9" y2="422.8" stroke="#9a9a9a" stroke-width="1.4"/><text x="1001.9" y="434.5" font-size="10.8" fill="#dcdcdc" stroke="#dcdcdc" stroke-width="0.25" text-anchor="middle" >0,35</text><line x1="729.3000000000001" y1="182.5" x2="733.1" y2="182.5" stroke="#9a9a9a" stroke-width="1.4"/><text x="728.5" y="186.8" font-size="10.8" fill="#dcdcdc" stroke="#dcdcdc" stroke-width="0.25" text-anchor="end" >0,4</text><line x1="1040.3" y1="418.5" x2="1040.3" y2="422.8" stroke="#9a9a9a" stroke-width="1.4"/><text x="1040.3" y="434.5" font-size="10.8" fill="#dcdcdc" stroke="#dcdcdc" stroke-width="0.25" text-anchor="middle" >0,4</text><line x1="729.3000000000001" y1="153.0" x2="733.1" y2="153.0" stroke="#9a9a9a" stroke-width="1.4"/><text x="728.5" y="157.3" font-size="10.8" fill="#dcdcdc" stroke="#dcdcdc" stroke-width="0.25" text-anchor="end" >0,45</text><line x1="1078.7" y1="418.5" x2="1078.7" y2="422.8" stroke="#9a9a9a" stroke-width="1.4"/><text x="1078.7" y="434.5" font-size="10.8" fill="#dcdcdc" stroke="#dcdcdc" stroke-width="0.25" text-anchor="middle" >0,45</text><line x1="729.3000000000001" y1="123.4" x2="733.1" y2="123.4" stroke="#9a9a9a" stroke-width="1.4"/><text x="728.5" y="127.7" font-size="10.8" fill="#dcdcdc" stroke="#dcdcdc" stroke-width="0.25" text-anchor="end" >0,5</text><line x1="1117.1" y1="418.5" x2="1117.1" y2="422.8" stroke="#9a9a9a" stroke-width="1.4"/><text x="1117.1" y="434.5" font-size="10.8" fill="#dcdcdc" stroke="#dcdcdc" stroke-width="0.25" text-anchor="middle" >0,5</text><line x1="729.3000000000001" y1="93.9" x2="733.1" y2="93.9" stroke="#9a9a9a" stroke-width="1.4"/><text x="728.5" y="98.2" font-size="10.8" fill="#dcdcdc" stroke="#dcdcdc" stroke-width="0.25" text-anchor="end" >0,55</text><line x1="1155.5" y1="418.5" x2="1155.5" y2="422.8" stroke="#9a9a9a" stroke-width="1.4"/><text x="1155.5" y="434.5" font-size="10.8" fill="#dcdcdc" stroke="#dcdcdc" stroke-width="0.25" text-anchor="middle" >0,55</text><rect x="733.1" y="63.4" width="460.7" height="355.1" fill="none" stroke="#9a9a9a" stroke-width="1.5"/><rect x="1010" y="395" width="182.8" height="20" fill="#303030"/><text x="1011" y="410.1" font-size="14" fill="#f0f0f0" stroke="#f0f0f0" stroke-width="0.25" text-anchor="start" textLength="147" lengthAdjust="spacingAndGlyphs" >Gamut Coverage:  98%</text><rect x="879.6" y="136.0" width="9.7" height="9.7" fill="none" stroke="#000" stroke-width="1.1"/><circle cx="885.3" cy="140.4" r="3.1" fill="#ffffff" stroke="#000" stroke-width="1.1"/><rect x="1073.8" y="103.7" width="9.7" height="9.7" fill="none" stroke="#fff" stroke-width="1.1"/><circle cx="1077.7" cy="108.8" r="3.1" fill="#d00000" stroke="#000" stroke-width="1.1"/><rect x="823.6" y="80.2" width="9.7" height="9.7" fill="none" stroke="#fff" stroke-width="1.1"/><circle cx="830.3" cy="84.8" r="3.1" fill="#00a800" stroke="#000" stroke-width="1.1"/><rect x="862.4" y="319.8" width="9.7" height="9.7" fill="none" stroke="#fff" stroke-width="1.1"/><circle cx="864.9" cy="322.2" r="3.1" fill="#0000b0" stroke="#000" stroke-width="1.1"/><rect x="833.9" y="143.6" width="9.7" height="9.7" fill="none" stroke="#fff" stroke-width="1.1"/><circle cx="840.4" cy="147.5" r="3.1" fill="#00b0b0" stroke="#000" stroke-width="1.1"/><rect x="961.9" y="218.0" width="9.7" height="9.7" fill="none" stroke="#fff" stroke-width="1.1"/><circle cx="962.4" cy="224.8" r="3.1" fill="#b000b0" stroke="#000" stroke-width="1.1"/><rect x="884.3" y="85.9" width="9.7" height="9.7" fill="none" stroke="#fff" stroke-width="1.1"/><circle cx="888.9" cy="90.4" r="3.1" fill="#b0a800" stroke="#000" stroke-width="1.1"/><text x="9.4" y="492" font-size="22.8" fill="#f0f0f0" stroke="#f0f0f0" stroke-width="0.35" text-anchor="start" textLength="157.5" lengthAdjust="spacingAndGlyphs" >Current Reading</text><text x="9.4" y="541.7" font-size="17.5" fill="#f0f0f0" stroke="#f0f0f0" stroke-width="0.35" text-anchor="start" textLength="73.1" lengthAdjust="spacingAndGlyphs" >x: 0,3141</text><text x="121.9" y="541.7" font-size="17.5" fill="#f0f0f0" stroke="#f0f0f0" stroke-width="0.35" text-anchor="start" textLength="63.7" lengthAdjust="spacingAndGlyphs" >y: 0,329</text><text x="9.4" y="570.6" font-size="17.5" fill="#f0f0f0" stroke="#f0f0f0" stroke-width="0.35" text-anchor="start" textLength="69" lengthAdjust="spacingAndGlyphs" >fL: 79,71</text><text x="9.4" y="600.6" font-size="17.5" fill="#f0f0f0" stroke="#f0f0f0" stroke-width="0.35" text-anchor="start" textLength="114.3" lengthAdjust="spacingAndGlyphs" >cd/m²: 273,11</text><text x="305.8" y="467.8" font-size="11" fill="#dcdcdc" stroke="#dcdcdc" stroke-width="0.25" text-anchor="start" textLength="58.7" lengthAdjust="spacingAndGlyphs" >RGB Balance</text><line x1="244.7" y1="472.3" x2="436.1" y2="472.3" stroke="#9a9a9a" stroke-width="1.5"/><text x="243.2" y="476.5" font-size="11" fill="#dcdcdc" stroke="#dcdcdc" stroke-width="0.25" text-anchor="end" >4</text><line x1="244.7" y1="504.9" x2="436.1" y2="504.9" stroke="#9a9a9a" stroke-width="1.5"/><text x="243.2" y="509.1" font-size="11" fill="#dcdcdc" stroke="#dcdcdc" stroke-width="0.25" text-anchor="end" >2</text><line x1="244.7" y1="537.5" x2="436.1" y2="537.5" stroke="#9a9a9a" stroke-width="1.5"/><text x="243.2" y="541.7" font-size="11" fill="#dcdcdc" stroke="#dcdcdc" stroke-width="0.25" text-anchor="end" >0</text><line x1="244.7" y1="570.0" x2="436.1" y2="570.0" stroke="#9a9a9a" stroke-width="1.5"/><text x="243.2" y="574.2" font-size="11" fill="#dcdcdc" stroke="#dcdcdc" stroke-width="0.25" text-anchor="end" >-2</text><line x1="244.7" y1="602.6" x2="436.1" y2="602.6" stroke="#9a9a9a" stroke-width="1.5"/><text x="243.2" y="606.8" font-size="11" fill="#dcdcdc" stroke="#dcdcdc" stroke-width="0.25" text-anchor="end" >-4</text><line x1="248.2" y1="472.3" x2="248.2" y2="606.4" stroke="#9a9a9a" stroke-width="1.5"/><line x1="436.1" y1="472.3" x2="436.1" y2="606.4" stroke="#9a9a9a" stroke-width="1.5"/><rect x="266.5" y="507.2" width="49" height="30.2" fill="url(#rb)" stroke="#080808" stroke-width="1.5"/><rect x="316.4" y="537.7" width="49" height="7.3" fill="#008c00" stroke="#080808" stroke-width="1.5"/><rect x="366.6" y="537.7" width="49" height="8.2" fill="#0000f0" stroke="#080808" stroke-width="1.5"/><text x="342.1" y="613.6" font-size="10.5" fill="#dcdcdc" stroke="#dcdcdc" stroke-width="0.25" text-anchor="middle" textLength="27.5" lengthAdjust="spacingAndGlyphs" >100W</text><rect x="457.8" y="465.3" width="246" height="143.2" fill="none" stroke="#a8a8a8" stroke-width="1"/><text x="553.5" y="461.5" font-size="11" fill="#dcdcdc" stroke="#dcdcdc" stroke-width="0.25" text-anchor="start" textLength="55" lengthAdjust="spacingAndGlyphs" >CIE 1931 xy</text><rect x="574.9" y="531.7" width="10.6" height="10" fill="#fff" stroke="#000" stroke-width="1.3"/><line x1="574.7" y1="531.5" x2="574.7" y2="542" stroke="#000" stroke-width="1.2"/><circle cx="588.9" cy="534.3" r="3" fill="#fff" stroke="#000" stroke-width="1"/><circle cx="587.6" cy="536.6" r="2.8" fill="#fff" stroke="#000" stroke-width="1"/><defs><clipPath id="tc"><rect x="717" y="455" width="456.5" height="145.5"/></clipPath></defs><g clip-path="url(#tc)"><rect x="717" y="455" width="456.5" height="145.5" fill="#3a3a3a"/><rect x="727" y="455" width="446.5" height="12.3" fill="#2c2c2c"/><rect x="727" y="467.3" width="446.5" height="11.7" fill="#1c1c1c"/><rect x="717" y="455" width="10" height="24" fill="#000"/><rect x="727" y="479.0" width="446.5" height="22.35" fill="#3c3c3c"/><rect x="717" y="479.0" width="10" height="22.35" fill="#2a2a2a"/><text x="730.2" y="495.8" font-size="13.5" fill="#f0f0f0" stroke="#f0f0f0" stroke-width="0.25" text-anchor="start" textLength="43.5" lengthAdjust="spacingAndGlyphs" >x: CIE31</text><text x="782.5" y="495.8" font-size="13.5" fill="#f0f0f0" stroke="#f0f0f0" stroke-width="0.25" text-anchor="start" textLength="36.3" lengthAdjust="spacingAndGlyphs" >0,3144</text><text x="840" y="495.8" font-size="13.5" fill="#f0f0f0" stroke="#f0f0f0" stroke-width="0.25" text-anchor="start" textLength="36.3" lengthAdjust="spacingAndGlyphs" >0,6379</text><text x="890" y="495.8" font-size="13.5" fill="#f0f0f0" stroke="#f0f0f0" stroke-width="0.25" text-anchor="start" textLength="36.3" lengthAdjust="spacingAndGlyphs" >0,3047</text><text x="947" y="495.8" font-size="13.5" fill="#f0f0f0" stroke="#f0f0f0" stroke-width="0.25" text-anchor="start" textLength="36.3" lengthAdjust="spacingAndGlyphs" >0,1485</text><text x="997.5" y="495.8" font-size="13.5" fill="#f0f0f0" stroke="#f0f0f0" stroke-width="0.25" text-anchor="start" textLength="36.3" lengthAdjust="spacingAndGlyphs" >0,2284</text><text x="1054.5" y="495.8" font-size="13.5" fill="#f0f0f0" stroke="#f0f0f0" stroke-width="0.25" text-anchor="start" textLength="36.3" lengthAdjust="spacingAndGlyphs" >0,3141</text><text x="1106" y="495.8" font-size="13.5" fill="#f0f0f0" stroke="#f0f0f0" stroke-width="0.25" text-anchor="start" textLength="36.3" lengthAdjust="spacingAndGlyphs" >0,4196</text><text x="1163.2" y="495.8" font-size="13.5" fill="#f0f0f0" stroke="#f0f0f0" stroke-width="0.25" text-anchor="start" textLength="16.5" lengthAdjust="spacingAndGlyphs" >0,3</text><rect x="727" y="501.4" width="446.5" height="22.35" fill="#7a7a7a"/><rect x="717" y="501.4" width="10" height="22.35" fill="#2a2a2a"/><text x="730.2" y="518.1" font-size="13.5" fill="#f0f0f0" stroke="#f0f0f0" stroke-width="0.25" text-anchor="start" textLength="43.5" lengthAdjust="spacingAndGlyphs" >y: CIE31</text><text x="782.5" y="518.1" font-size="13.5" fill="#f0f0f0" stroke="#f0f0f0" stroke-width="0.25" text-anchor="start" textLength="36.3" lengthAdjust="spacingAndGlyphs" >0,3296</text><text x="840" y="518.1" font-size="13.5" fill="#f0f0f0" stroke="#f0f0f0" stroke-width="0.25" text-anchor="start" textLength="36.3" lengthAdjust="spacingAndGlyphs" >0,3295</text><text x="890" y="518.1" font-size="13.5" fill="#f0f0f0" stroke="#f0f0f0" stroke-width="0.25" text-anchor="start" textLength="36.3" lengthAdjust="spacingAndGlyphs" >0,5989</text><text x="947" y="518.1" font-size="13.5" fill="#f0f0f0" stroke="#f0f0f0" stroke-width="0.25" text-anchor="start" textLength="36.3" lengthAdjust="spacingAndGlyphs" >0,0620</text><text x="997.5" y="518.1" font-size="13.5" fill="#f0f0f0" stroke="#f0f0f0" stroke-width="0.25" text-anchor="start" textLength="36.3" lengthAdjust="spacingAndGlyphs" >0,3305</text><text x="1054.5" y="518.1" font-size="13.5" fill="#f0f0f0" stroke="#f0f0f0" stroke-width="0.25" text-anchor="start" textLength="36.3" lengthAdjust="spacingAndGlyphs" >0,1522</text><text x="1106" y="518.1" font-size="13.5" fill="#f0f0f0" stroke="#f0f0f0" stroke-width="0.25" text-anchor="start" textLength="36.3" lengthAdjust="spacingAndGlyphs" >0,5070</text><text x="1163.2" y="518.1" font-size="13.5" fill="#f0f0f0" stroke="#f0f0f0" stroke-width="0.25" text-anchor="start" textLength="16.5" lengthAdjust="spacingAndGlyphs" >0,3</text><rect x="727" y="523.7" width="446.5" height="22.35" fill="#3c3c3c"/><rect x="717" y="523.7" width="10" height="22.35" fill="#2a2a2a"/><text x="730.2" y="540.5" font-size="13.5" fill="#f0f0f0" stroke="#f0f0f0" stroke-width="0.25" text-anchor="start" textLength="7.6" lengthAdjust="spacingAndGlyphs" >Y</text><text x="782.5" y="540.5" font-size="13.5" fill="#f0f0f0" stroke="#f0f0f0" stroke-width="0.25" text-anchor="start" textLength="49.6" lengthAdjust="spacingAndGlyphs" >137,6995</text><text x="840" y="540.5" font-size="13.5" fill="#f0f0f0" stroke="#f0f0f0" stroke-width="0.25" text-anchor="start" textLength="42.9" lengthAdjust="spacingAndGlyphs" >28,9793</text><text x="890" y="540.5" font-size="13.5" fill="#f0f0f0" stroke="#f0f0f0" stroke-width="0.25" text-anchor="start" textLength="49.6" lengthAdjust="spacingAndGlyphs" >104,9905</text><text x="947" y="540.5" font-size="13.5" fill="#f0f0f0" stroke="#f0f0f0" stroke-width="0.25" text-anchor="start" textLength="42.9" lengthAdjust="spacingAndGlyphs" >10,9508</text><text x="997.5" y="540.5" font-size="13.5" fill="#f0f0f0" stroke="#f0f0f0" stroke-width="0.25" text-anchor="start" textLength="48.7" lengthAdjust="spacingAndGlyphs" >116,2505</text><text x="1054.5" y="540.5" font-size="13.5" fill="#f0f0f0" stroke="#f0f0f0" stroke-width="0.25" text-anchor="start" textLength="42.9" lengthAdjust="spacingAndGlyphs" >40,6495</text><text x="1106" y="540.5" font-size="13.5" fill="#f0f0f0" stroke="#f0f0f0" stroke-width="0.25" text-anchor="start" textLength="49.6" lengthAdjust="spacingAndGlyphs" >135,0214</text><text x="1163.2" y="540.5" font-size="13.5" fill="#f0f0f0" stroke="#f0f0f0" stroke-width="0.25" text-anchor="start" textLength="29.7" lengthAdjust="spacingAndGlyphs" >273,1</text><rect x="727" y="546.0" width="446.5" height="22.35" fill="#7a7a7a"/><rect x="717" y="546.0" width="10" height="22.35" fill="#2a2a2a"/><text x="730.2" y="562.8" font-size="13.5" fill="#f0f0f0" stroke="#f0f0f0" stroke-width="0.25" text-anchor="start" textLength="42.0" lengthAdjust="spacingAndGlyphs" >Target Y</text><text x="782.5" y="562.8" font-size="13.5" fill="#f0f0f0" stroke="#f0f0f0" stroke-width="0.25" text-anchor="start" textLength="49.6" lengthAdjust="spacingAndGlyphs" >144,6179</text><text x="840" y="562.8" font-size="13.5" fill="#f0f0f0" stroke="#f0f0f0" stroke-width="0.25" text-anchor="start" textLength="42.9" lengthAdjust="spacingAndGlyphs" >30,7539</text><text x="890" y="562.8" font-size="13.5" fill="#f0f0f0" stroke="#f0f0f0" stroke-width="0.25" text-anchor="start" textLength="49.6" lengthAdjust="spacingAndGlyphs" >103,4247</text><text x="947" y="562.8" font-size="13.5" fill="#f0f0f0" stroke="#f0f0f0" stroke-width="0.25" text-anchor="start" textLength="42.9" lengthAdjust="spacingAndGlyphs" >10,4393</text><text x="997.5" y="562.8" font-size="13.5" fill="#f0f0f0" stroke="#f0f0f0" stroke-width="0.25" text-anchor="start" textLength="48.7" lengthAdjust="spacingAndGlyphs" >113,8640</text><text x="1054.5" y="562.8" font-size="13.5" fill="#f0f0f0" stroke="#f0f0f0" stroke-width="0.25" text-anchor="start" textLength="42.9" lengthAdjust="spacingAndGlyphs" >41,1932</text><text x="1106" y="562.8" font-size="13.5" fill="#f0f0f0" stroke="#f0f0f0" stroke-width="0.25" text-anchor="start" textLength="49.6" lengthAdjust="spacingAndGlyphs" >134,1786</text><text x="1163.2" y="562.8" font-size="13.5" fill="#f0f0f0" stroke="#f0f0f0" stroke-width="0.25" text-anchor="start" textLength="29.7" lengthAdjust="spacingAndGlyphs" >273,1</text><rect x="727" y="568.4" width="446.5" height="22.35" fill="#3c3c3c"/><rect x="717" y="568.4" width="10" height="22.35" fill="#2a2a2a"/><text x="730.2" y="585.2" font-size="13.5" fill="#f0f0f0" stroke="#f0f0f0" stroke-width="0.25" text-anchor="start" textLength="45.1" lengthAdjust="spacingAndGlyphs" >ΔE 2000</text><text x="782.5" y="585.2" font-size="13.5" fill="#f0f0f0" stroke="#f0f0f0" stroke-width="0.25" text-anchor="start" textLength="36.3" lengthAdjust="spacingAndGlyphs" >1,3756</text><text x="840" y="585.2" font-size="13.5" fill="#f0f0f0" stroke="#f0f0f0" stroke-width="0.25" text-anchor="start" textLength="36.3" lengthAdjust="spacingAndGlyphs" >1,1799</text><text x="890" y="585.2" font-size="13.5" fill="#f0f0f0" stroke="#f0f0f0" stroke-width="0.25" text-anchor="start" textLength="36.3" lengthAdjust="spacingAndGlyphs" >0,7099</text><text x="947" y="585.2" font-size="13.5" fill="#f0f0f0" stroke="#f0f0f0" stroke-width="0.25" text-anchor="start" textLength="36.3" lengthAdjust="spacingAndGlyphs" >0,9582</text><text x="997.5" y="585.2" font-size="13.5" fill="#f0f0f0" stroke="#f0f0f0" stroke-width="0.25" text-anchor="start" textLength="36.3" lengthAdjust="spacingAndGlyphs" >0,7201</text><text x="1054.5" y="585.2" font-size="13.5" fill="#f0f0f0" stroke="#f0f0f0" stroke-width="0.25" text-anchor="start" textLength="36.3" lengthAdjust="spacingAndGlyphs" >0,7332</text><text x="1106" y="585.2" font-size="13.5" fill="#f0f0f0" stroke="#f0f0f0" stroke-width="0.25" text-anchor="start" textLength="36.3" lengthAdjust="spacingAndGlyphs" >0,2857</text><text x="1163.2" y="585.2" font-size="13.5" fill="#f0f0f0" stroke="#f0f0f0" stroke-width="0.25" text-anchor="start" textLength="16.5" lengthAdjust="spacingAndGlyphs" >1,1</text><rect x="727" y="590.8" width="446.5" height="22.35" fill="#7a7a7a"/><rect x="717" y="590.8" width="10" height="22.35" fill="#2a2a2a"/><text x="730.2" y="606.3" font-size="13.5" fill="#f0f0f0" stroke="#f0f0f0" stroke-width="0.25" text-anchor="start" textLength="37.2" lengthAdjust="spacingAndGlyphs" >ΔE ITP</text><text x="782.5" y="606.3" font-size="13.5" fill="#f0f0f0" stroke="#f0f0f0" stroke-width="0.25" text-anchor="start" textLength="36.3" lengthAdjust="spacingAndGlyphs" >3,7568</text><text x="840" y="606.3" font-size="13.5" fill="#f0f0f0" stroke="#f0f0f0" stroke-width="0.25" text-anchor="start" textLength="36.3" lengthAdjust="spacingAndGlyphs" >4,8568</text><text x="890" y="606.3" font-size="13.5" fill="#f0f0f0" stroke="#f0f0f0" stroke-width="0.25" text-anchor="start" textLength="36.3" lengthAdjust="spacingAndGlyphs" >2,4727</text><text x="947" y="606.3" font-size="13.5" fill="#f0f0f0" stroke="#f0f0f0" stroke-width="0.25" text-anchor="start" textLength="36.3" lengthAdjust="spacingAndGlyphs" >4,3939</text><text x="997.5" y="606.3" font-size="13.5" fill="#f0f0f0" stroke="#f0f0f0" stroke-width="0.25" text-anchor="start" textLength="36.3" lengthAdjust="spacingAndGlyphs" >3,7944</text><text x="1054.5" y="606.3" font-size="13.5" fill="#f0f0f0" stroke="#f0f0f0" stroke-width="0.25" text-anchor="start" textLength="36.3" lengthAdjust="spacingAndGlyphs" >6,0813</text><text x="1106" y="606.3" font-size="13.5" fill="#f0f0f0" stroke="#f0f0f0" stroke-width="0.25" text-anchor="start" textLength="36.3" lengthAdjust="spacingAndGlyphs" >1,2448</text><text x="1163.2" y="606.3" font-size="13.5" fill="#f0f0f0" stroke="#f0f0f0" stroke-width="0.25" text-anchor="start" textLength="16.5" lengthAdjust="spacingAndGlyphs" >0,9</text><text x="782.5" y="472.3" font-size="12" fill="#f0f0f0" stroke="#f0f0f0" stroke-width="0.25" text-anchor="start" textLength="30.1" lengthAdjust="spacingAndGlyphs" >White</text><text x="840" y="472.3" font-size="12" fill="#f0f0f0" stroke="#f0f0f0" stroke-width="0.25" text-anchor="start" textLength="21.6" lengthAdjust="spacingAndGlyphs" >Red</text><text x="890" y="472.3" font-size="12" fill="#f0f0f0" stroke="#f0f0f0" stroke-width="0.25" text-anchor="start" textLength="32.7" lengthAdjust="spacingAndGlyphs" >Green</text><text x="947" y="472.3" font-size="12" fill="#f0f0f0" stroke="#f0f0f0" stroke-width="0.25" text-anchor="start" textLength="23.5" lengthAdjust="spacingAndGlyphs" >Blue</text><text x="997.5" y="472.3" font-size="12" fill="#f0f0f0" stroke="#f0f0f0" stroke-width="0.25" text-anchor="start" textLength="27.5" lengthAdjust="spacingAndGlyphs" >Cyan</text><text x="1054.5" y="472.3" font-size="12" fill="#f0f0f0" stroke="#f0f0f0" stroke-width="0.25" text-anchor="start" textLength="45.8" lengthAdjust="spacingAndGlyphs" >Magenta</text><text x="1106" y="472.3" font-size="12" fill="#f0f0f0" stroke="#f0f0f0" stroke-width="0.25" text-anchor="start" textLength="33.6" lengthAdjust="spacingAndGlyphs" >Yellow</text><text x="1163.2" y="472.3" font-size="12" fill="#f0f0f0" stroke="#f0f0f0" stroke-width="0.25" text-anchor="start" textLength="30.7" lengthAdjust="spacingAndGlyphs" >100W</text></g><rect x="1173.5" y="479" width="12" height="121.5" fill="#5a5a5a"/><rect x="1174.4" y="480" width="10.8" height="12.5" rx="2" fill="#6e6e6e"/><path d="M1176.5 489 L1183 489 L1179.75 485.5 Z" fill="#3a3a3a"/><rect x="1175.5" y="494" width="8.6" height="75.5" rx="4" fill="#3e3e3e"/><rect x="1174.4" y="588.3" width="10.8" height="11.5" rx="2" fill="#6e6e6e"/><path d="M1176.5 592 L1183 592 L1179.75 595.5 Z" fill="#3a3a3a"/><rect x="727.3" y="601.2" width="445.2" height="13" rx="1.5" fill="#5a5a5a"/><rect x="727.3" y="602" width="10.8" height="11.5" rx="2" fill="#6e6e6e"/><path d="M734.5 604.8 L734.5 610.8 L731 607.8 Z" fill="#3a3a3a"/><rect x="741" y="602.5" width="382" height="10.5" rx="5" fill="#3e3e3e"/><rect x="1161.7" y="602" width="10.8" height="11.5" rx="2" fill="#6e6e6e"/><path d="M1165.5 604.8 L1165.5 610.8 L1169 607.8 Z" fill="#3a3a3a"/></svg>
<script>(function(){
var L=[[.1741,.005],[.174,.005],[.1738,.0049],[.1736,.0049],[.1733,.0048],[.173,.0048],[.1726,.0048],[.1721,.0048],[.1714,.0051],[.1703,.0058],[.1689,.0069],[.1669,.0086],[.1644,.0109],[.1611,.0138],[.1566,.0177],[.151,.0227],[.144,.0297],[.1355,.0399],[.1241,.0578],[.1096,.0868],[.0913,.1327],[.0687,.2007],[.0454,.295],[.0235,.4127],[.0082,.5384],[.0039,.6548],[.0139,.7502],[.0389,.812],[.0743,.8338],[.1142,.8262],[.1547,.8059],[.1929,.7816],[.2296,.7543],[.2658,.7243],[.3016,.6923],[.3373,.6589],[.3731,.6245],[.4087,.5896],[.4441,.5547],[.4788,.5202],[.5125,.4866],[.5448,.4544],[.5752,.4242],[.6029,.3965],[.627,.3725],[.6482,.3514],[.6658,.334],[.6801,.3197],[.6915,.3083],[.7006,.2993],[.7079,.292],[.714,.2859],[.719,.2809],[.723,.277],[.726,.274],[.7283,.2717],[.73,.27],[.7311,.2689],[.732,.268],[.7327,.2673],[.7334,.2666],[.734,.266],[.7344,.2656],[.7346,.2654],[.7347,.2653]];
var GAM=1.0, DIM=0.6;
function col(x,y,out){
  var X=x/y, Y=1, Z=(1-x-y)/y;
  var r=3.2406*X-1.5372*Y-0.4986*Z, g=-0.9689*X+1.8758*Y+0.0415*Z, b=0.0557*X-0.2040*Y+1.0570*Z;
  var o=(r<0||g<0||b<0);
  if(r<0)r=0; if(g<0)g=0; if(b<0)b=0;
  var m=Math.max(r,g,b); if(m<=0)m=1;
  r/=m; g/=m; b/=m;
  if(GAM!=1){r=Math.pow(r,1/GAM);g=Math.pow(g,1/GAM);b=Math.pow(b,1/GAM);}
  var d=o?DIM:1;
  out[0]=r*255*d; out[1]=g*255*d; out[2]=b*255*d;
}
function uvDiagram(){
  var cv=document.getElementById('uv'); if(!cv) return;
  var W=cv.width,H=cv.height, ctx=cv.getContext('2d');
  var OX=733, OY=63, UL=733.1, VB=418.5, UP=768, VP=592;
  ctx.fillStyle='#232323'; ctx.fillRect(0,0,W,H);
  var off=document.createElement('canvas'); off.width=W; off.height=H;
  var oc=off.getContext('2d'); var img=oc.createImageData(W,H); var d=img.data; var c=[0,0,0];
  var SS=[0.25,0.75];
  for(var j=0;j<H;j++){ for(var i=0;i<W;i++){
    var ar=0,ag=0,ab=0;
    for(var a=0;a<2;a++)for(var b=0;b<2;b++){
      var u=(OX+i+SS[a]-UL)/UP, v=(VB-(OY+j+SS[b]))/VP;
      if(v<0.001)v=0.001;
      var den=6*u-16*v+12, x=9*u/den, y=4*v/den;
      col(x,y,c); ar+=c[0]; ag+=c[1]; ab+=c[2];
    }
    var k=(j*W+i)*4; d[k]=ar/4;d[k+1]=ag/4;d[k+2]=ab/4;d[k+3]=255;
  }}
  oc.putImageData(img,0,0);
  ctx.save(); ctx.beginPath();
  for(var n=0;n<L.length;n++){
    var x=L[n][0],y=L[n][1], den=-2*x+12*y+3, u=4*x/den, v=9*y/den;
    var px=UL+u*UP-OX, py=VB-v*VP-OY;
    if(n==0)ctx.moveTo(px,py); else ctx.lineTo(px,py);
  }
  ctx.closePath(); ctx.clip(); ctx.drawImage(off,0,0); ctx.restore();
}
function xyDiagram(){
  var cv=document.getElementById('xy'); if(!cv) return;
  var W=cv.width,H=cv.height, ctx=cv.getContext('2d');
  var img=ctx.createImageData(W,H), d=img.data, c=[0,0,0];
  var cx=0.3127, cy=0.329, sx=0.03, sy=0.028;
  for(var j=0;j<H;j++){ for(var i=0;i<W;i++){
    var x=cx+((i+0.5)/W-0.5)*2*sx, y=cy-((j+0.5)/H-0.5)*2*sy;
    col(x,y,c); var k=(j*W+i)*4; d[k]=c[0];d[k+1]=c[1];d[k+2]=c[2];d[k+3]=255;
  }}
  ctx.putImageData(img,0,0);
}
uvDiagram(); xyDiagram();
})();
</script>
</body></html>
